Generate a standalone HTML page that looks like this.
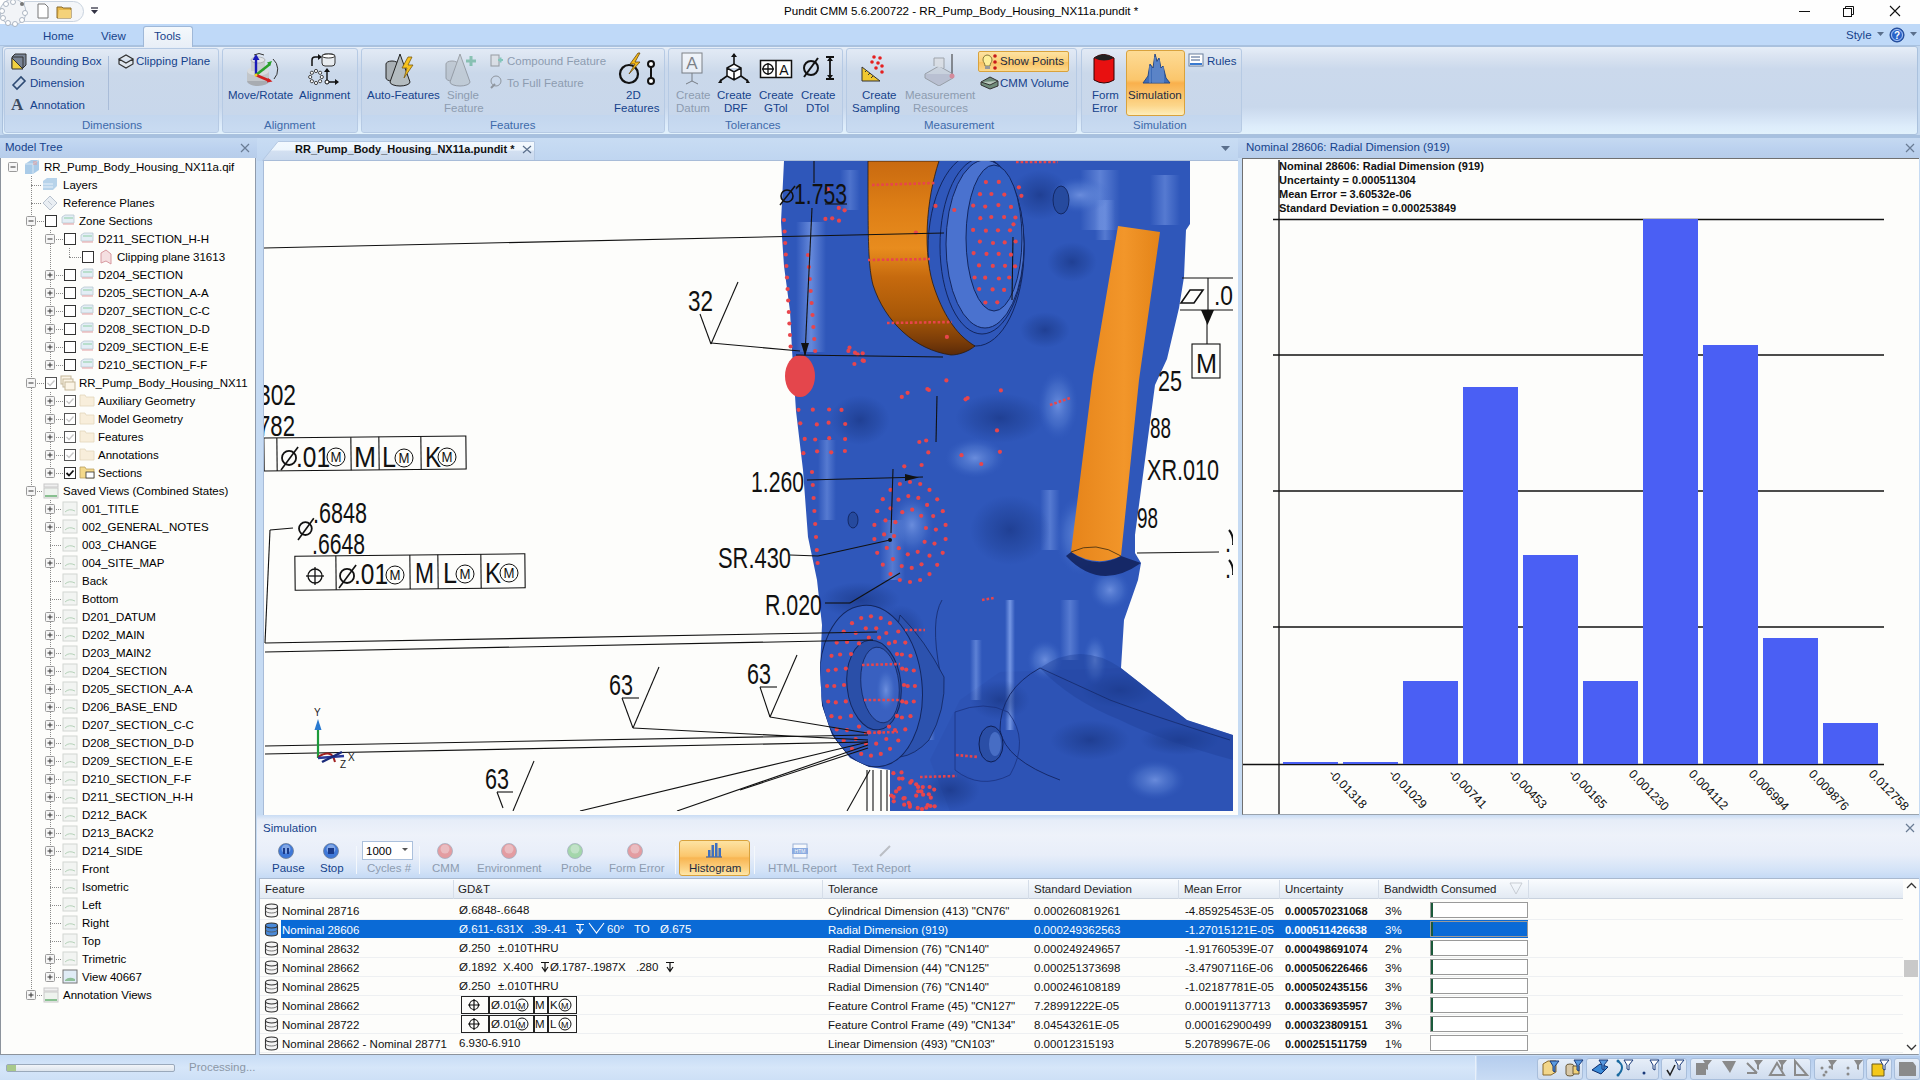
<!DOCTYPE html>
<html><head><meta charset="utf-8">
<style>
*{margin:0;padding:0;box-sizing:border-box}
html,body{width:1920px;height:1080px;overflow:hidden;background:#c4d8ef;font-family:"Liberation Sans",sans-serif;font-size:12px;color:#000}
.a{position:absolute}
.t{position:absolute;white-space:nowrap;line-height:1}
.rb{color:#15428b}
.dis{color:#8d9cb0}
.grp{top:48px;height:85px;border:1px solid #b6cae4;border-radius:3px;background:linear-gradient(#e2eaf5 0px,#d9e3f0 10px,#cad8ea 24px,#c8d7eb 66px,#c0d3ec 68px,#c4d7ef 84px);overflow:hidden}
.grp::after{content:"";position:absolute;left:0;right:0;bottom:0;height:17px;background:linear-gradient(#c3d6ee,#c9dbf1)}
</style></head><body>
<!-- TITLE BAR -->
<div class="a" style="left:0;top:0;width:1920px;height:24px;background:#fefefe"></div>
<div class="t" style="left:784px;top:5px;font-size:11.6px;color:#000">Pundit CMM 5.6.200722 - RR_Pump_Body_Housing_NX11a.pundit *</div>
<!-- TAB BAR -->
<div class="a" style="left:0;top:24px;width:1920px;height:22px;background:#bfd9f8"></div>
<div class="a" style="left:0;top:45px;width:1920px;height:1px;background:#a9c2e0"></div>
<!-- RIBBON -->
<div class="a" style="left:2px;top:46px;width:1916px;height:89px;border:1px solid #aac1dd;border-radius:3px;background:linear-gradient(#e6eef8 0px,#dce5f2 8px,#cbd9ec 22px,#c9d8ec 60px,#d3e2f4 70px,#deedfb 80px,#e2f2fc 89px)"></div>
<div class="a" style="left:0;top:135px;width:1920px;height:3px;background:#a7c0df"></div>

<!-- QUICK ACCESS -->
<div class="a" style="left:24px;top:1px;width:60px;height:21px;border:1px solid #c9d3df;border-radius:0 11px 11px 0;background:#f4f6f9"></div>
<svg class="a" style="left:0;top:0" width="30" height="27"><circle cx="13" cy="12" r="13" fill="#f2f4f7" stroke="#b8c2cf"/><g fill="#fff" stroke="#9aa6b5" stroke-width="0.8"><circle cx="6" cy="4" r="2.5"/><circle cx="13" cy="2" r="2.5"/><circle cx="2" cy="11" r="2.5"/><circle cx="3" cy="18" r="2.5"/><circle cx="8" cy="23" r="2.5"/><circle cx="15" cy="24" r="2.5"/><circle cx="22" cy="20" r="2.5"/><circle cx="25" cy="13" r="2.5"/></g><circle cx="22" cy="4" r="2" fill="#777"/></svg>
<svg class="a" style="left:36px;top:3px" width="40" height="17"><path d="M2 1h7l3 3v11H2z" fill="#fff" stroke="#777" stroke-width="1"/><path d="M21 4h5l1 1h8v10H21z" fill="#e8b84a" stroke="#8a6b2a"/><path d="M23 7h12v8H22z" fill="#f4d27a"/></svg>
<svg class="a" style="left:90px;top:6px" width="10" height="10"><path d="M1 2h7" stroke="#334" stroke-width="1.3"/><path d="M1 4h7l-3.5 4z" fill="#334"/></svg>
<!-- WINDOW CONTROLS -->
<div class="a" style="left:1799px;top:11px;width:11px;height:1px;background:#111"></div>
<svg class="a" style="left:1842px;top:5px" width="14" height="14"><rect x="1.5" y="3.5" width="8" height="8" fill="none" stroke="#111"/><path d="M3.5 3.5V1.5h8v8h-2" fill="none" stroke="#111"/></svg>
<svg class="a" style="left:1889px;top:5px" width="12" height="12"><path d="M1 1L11 11M11 1L1 11" stroke="#111" stroke-width="1.1"/></svg>
<!-- TABS -->
<div class="t rb" style="left:43px;top:31px;font-size:11.5px">Home</div>
<div class="t rb" style="left:101px;top:31px;font-size:11.5px">View</div>
<div class="a" style="left:143px;top:26px;width:50px;height:21px;border:1px solid #9fb8d8;border-bottom:none;border-radius:3px 3px 0 0;background:linear-gradient(#f4f8fc,#e8eef7)"></div>
<div class="t rb" style="left:154px;top:31px;font-size:11.5px">Tools</div>
<div class="t rb" style="left:1846px;top:30px;font-size:11.5px">Style</div>
<svg class="a" style="left:1877px;top:32px" width="8" height="5"><path d="M0 0h7l-3.5 4z" fill="#5a6f8c"/></svg>
<svg class="a" style="left:1889px;top:27px" width="16" height="16"><circle cx="8" cy="8" r="7" fill="#2a63c8" stroke="#1a3f8a"/><circle cx="8" cy="8" r="5.5" fill="none" stroke="#cfe0ff" stroke-width="0.8"/><text x="8" y="12" font-size="10" font-weight="bold" fill="#fff" text-anchor="middle" font-family="Liberation Sans">?</text></svg>
<svg class="a" style="left:1910px;top:32px" width="8" height="5"><path d="M0 0h7l-3.5 4z" fill="#5a6f8c"/></svg>
<!-- RIBBON GROUPS -->
<div class="a grp" style="left:4px;width:215px"></div>
<div class="a grp" style="left:222px;width:136px"></div>
<div class="a grp" style="left:361px;width:304px"></div>
<div class="a grp" style="left:668px;width:175px"></div>
<div class="a grp" style="left:846px;width:231px"></div>
<div class="a grp" style="left:1081px;width:161px"></div>
<div class="t rb" style="left:82px;top:120px;font-size:11.5px;color:#3e6aaa">Dimensions</div>
<div class="t rb" style="left:264px;top:120px;font-size:11.5px;color:#3e6aaa">Alignment</div>
<div class="t rb" style="left:490px;top:120px;font-size:11.5px;color:#3e6aaa">Features</div>
<div class="t rb" style="left:725px;top:120px;font-size:11.5px;color:#3e6aaa">Tolerances</div>
<div class="t rb" style="left:924px;top:120px;font-size:11.5px;color:#3e6aaa">Measurement</div>
<div class="t rb" style="left:1133px;top:120px;font-size:11.5px;color:#3e6aaa">Simulation</div>
<!-- Dimensions group -->
<svg class="a" style="left:10px;top:53px" width="18" height="18"><path d="M2 4l3-3h11v11l-3 3H2z" fill="#7a8596" stroke="#333"/><path d="M2 4h11v11" fill="none" stroke="#333"/><path d="M2 5l11 11H2z" fill="#f0d040" stroke="#333"/></svg>
<div class="t rb" style="left:30px;top:56px;font-size:11.5px">Bounding Box</div>
<svg class="a" style="left:10px;top:75px" width="18" height="16"><path d="M3 10l8-8 4 4-8 8z" fill="none" stroke="#2d4a73" stroke-width="1.6"/></svg>
<div class="t rb" style="left:30px;top:78px;font-size:11.5px">Dimension</div>
<div class="t" style="left:11px;top:96px;font-size:17px;font-family:'Liberation Serif';font-weight:bold;color:#3a4a60">A</div>
<div class="t rb" style="left:30px;top:100px;font-size:11.5px">Annotation</div>
<div class="a" style="left:108px;top:56px;width:1px;height:54px;background:#a9bcd8"></div>
<svg class="a" style="left:117px;top:53px" width="18" height="16"><path d="M2 6l7-4 7 4-7 4z M2 6v5l7 4 7-4V6" fill="#dfe6ee" stroke="#333" stroke-width="1.2"/></svg>
<div class="t rb" style="left:136px;top:56px;font-size:11.5px">Clipping Plane</div>
<!-- Alignment group -->
<svg class="a" style="left:245px;top:52px" width="34" height="36"><ellipse cx="13" cy="29" rx="11" ry="5" fill="#a8acb2"/><rect x="2" y="19" width="22" height="10" fill="#c2c6ca"/><ellipse cx="13" cy="19" rx="11" ry="4.5" fill="#d8dbde"/><rect x="6" y="8" width="14" height="11" fill="#c8ccd0"/><ellipse cx="13" cy="8" rx="7" ry="3" fill="#e2e5e8" stroke="#999" stroke-width="0.6"/><path d="M11 23V6" stroke="#1a1ab8" stroke-width="2.4"/><path d="M7.5 8L11 2l3.5 6z" fill="#1a1ab8"/><path d="M11 23L25 12" stroke="#2aa02a" stroke-width="2.6"/><path d="M22 10.5l5-1.5-2 5z" fill="#2aa02a"/><path d="M11 23L25 29" stroke="#d02020" stroke-width="2.6"/><path d="M23 26l4.5 3.5-5.5 1z" fill="#d02020"/><circle cx="11" cy="23" r="1.5" fill="#f0d020"/><path d="M28 7a14 14 0 0 1 1 20" fill="none" stroke="#333" stroke-width="1"/><path d="M9 3q5-3 10 0" fill="none" stroke="#333" stroke-width="1"/></svg>
<svg class="a" style="left:307px;top:52px" width="36" height="36"><path d="M5 14V8a3 3 0 0 1 3-3h4" fill="none" stroke="#111" stroke-width="1.5"/><path d="M11 2l4 3-4 3z" fill="#111"/><rect x="15" y="2" width="13" height="12" rx="3" fill="#e8ecf0" stroke="#333"/><ellipse cx="21.5" cy="4" rx="6.5" ry="2" fill="#fff" stroke="#333"/><g fill="#fff" stroke="#333" stroke-width="0.9"><circle cx="14.8" cy="25.0" r="1.6"/><circle cx="13.1" cy="29.2" r="1.6"/><circle cx="9.0" cy="31.0" r="1.6"/><circle cx="4.9" cy="29.2" r="1.6"/><circle cx="3.2" cy="25.0" r="1.6"/><circle cx="4.9" cy="20.8" r="1.6"/><circle cx="9.0" cy="19.0" r="1.6"/><circle cx="13.1" cy="20.8" r="1.6"/></g><path d="M20 30V18M20 30h10" stroke="#111" stroke-width="1.4"/><path d="M17 20l3-4 3 4z M28 27l4 3-4 3z" fill="#111"/><circle cx="20" cy="30" r="2" fill="#fff" stroke="#111"/></svg>
<div class="t rb" style="left:228px;top:90px;font-size:11.5px">Move/Rotate</div>
<div class="t rb" style="left:299px;top:90px;font-size:11.5px">Alignment</div>
<!-- Features group -->
<svg class="a" style="left:384px;top:52px" width="36" height="36"><path d="M2 12a6 3 0 0 1 12 0v14a6 3 0 0 1-12 0z" fill="#a9b0b5" stroke="#222"/><path d="M16 2L6 30a10 4 0 0 0 20 0z" fill="#b4bcc0" stroke="#222"/><path d="M24 5l-6 11h5l-3 10 9-13h-5l4-8z" fill="#f7c21e" stroke="#7a5a10" stroke-width="0.8"/></svg>
<svg class="a" style="left:444px;top:52px" width="36" height="36" opacity="0.45"><path d="M2 12a6 3 0 0 1 12 0v14a6 3 0 0 1-12 0z" fill="#a9b0b5" stroke="#555"/><path d="M16 2L6 30a10 4 0 0 0 20 0z" fill="#b4bcc0" stroke="#555"/><path d="M27 4v10M22 9h10" stroke="#2a9a6a" stroke-width="3"/></svg>
<div class="t rb" style="left:367px;top:90px;font-size:11.5px">Auto-Features</div>
<div class="t dis" style="left:447px;top:90px;font-size:11.5px">Single</div>
<div class="t dis" style="left:444px;top:103px;font-size:11.5px">Feature</div>
<svg class="a" style="left:489px;top:53px" width="15" height="15" opacity="0.5"><rect x="2" y="2" width="8" height="11" fill="#ddd" stroke="#555"/><path d="M9 7h5M11.5 4.5v5" stroke="#3a8" stroke-width="2"/></svg>
<div class="t dis" style="left:507px;top:56px;font-size:11.5px">Compound Feature</div>
<svg class="a" style="left:488px;top:75px" width="15" height="15" opacity="0.5"><circle cx="8" cy="6" r="5" fill="none" stroke="#555"/><path d="M3 13l4-4" stroke="#555" stroke-width="2"/></svg>
<div class="t dis" style="left:507px;top:78px;font-size:11.5px">To Full Feature</div>
<svg class="a" style="left:617px;top:52px" width="44" height="36"><circle cx="12" cy="22" r="9" fill="none" stroke="#111" stroke-width="2.2"/><path d="M21 1l-8 11h5l-6 10 11-12h-5l5-9z" fill="#f3b81a" stroke="#6a4a10" stroke-width="0.8"/><circle cx="34" cy="12" r="3" fill="#fff" stroke="#111" stroke-width="2"/><circle cx="34" cy="29" r="3" fill="#fff" stroke="#111" stroke-width="2"/><path d="M34 15v11" stroke="#111" stroke-width="2"/></svg>
<div class="t rb" style="left:626px;top:90px;font-size:11.5px">2D</div>
<div class="t rb" style="left:614px;top:103px;font-size:11.5px">Features</div>
<!-- Tolerances group -->
<svg class="a" style="left:678px;top:51px" width="34" height="36" opacity="0.55"><rect x="4" y="2" width="20" height="20" fill="#fff" stroke="#333"/><text x="14" y="18" font-size="17" text-anchor="middle" fill="#333" font-family="Liberation Sans">A</text><path d="M14 22v8M8 33l6-3 6 3" stroke="#333" fill="none"/></svg>
<div class="t dis" style="left:676px;top:90px;font-size:11.5px">Create</div>
<div class="t dis" style="left:676px;top:103px;font-size:11.5px">Datum</div>
<svg class="a" style="left:717px;top:52px" width="36" height="36"><path d="M17 2v10" stroke="#111" stroke-width="1.6"/><path d="M14 5l3-4 3 4z" fill="#111"/><path d="M10 16l7-4 7 4v8l-7 4-7-4z M10 16l7 4 7-4 M17 20v8" fill="#fff" stroke="#111" stroke-width="1.5"/><path d="M10 24l-7 5M24 24l7 5" stroke="#111" stroke-width="1.6"/><path d="M1 31l3-4 1 4z M33 31l-3-4-1 4z" fill="#111"/></svg>
<div class="t rb" style="left:717px;top:90px;font-size:11.5px">Create</div>
<div class="t rb" style="left:724px;top:103px;font-size:11.5px">DRF</div>
<svg class="a" style="left:759px;top:58px" width="36" height="22"><rect x="1.5" y="2.5" width="31" height="17" fill="#fff" stroke="#111" stroke-width="1.5"/><path d="M17 3v16" stroke="#111" stroke-width="1.5"/><circle cx="9" cy="11" r="5" fill="none" stroke="#111" stroke-width="1.3"/><path d="M3 11h12M9 5v12" stroke="#111" stroke-width="1.3"/><text x="25" y="17" font-size="14" text-anchor="middle" fill="#111" font-family="Liberation Sans">A</text></svg>
<div class="t rb" style="left:759px;top:90px;font-size:11.5px">Create</div>
<div class="t rb" style="left:764px;top:103px;font-size:11.5px">GTol</div>
<svg class="a" style="left:801px;top:55px" width="36" height="26"><circle cx="10" cy="13" r="7" fill="none" stroke="#111" stroke-width="2"/><path d="M3 22L17 3" stroke="#111" stroke-width="2"/><path d="M29 2v22M25 2h8M25 24h8" stroke="#111" stroke-width="1.8"/><path d="M26 6l3-4 3 4zM26 20l3 4 3-4z" fill="#111"/></svg>
<div class="t rb" style="left:801px;top:90px;font-size:11.5px">Create</div>
<div class="t rb" style="left:806px;top:103px;font-size:11.5px">DTol</div>
<!-- Measurement group -->
<svg class="a" style="left:860px;top:55px" width="30" height="30"><path d="M2 12l18 14H2z" fill="#f0c830" stroke="#333"/><path d="M5 17l2-2M8 20l2-2M11 23l2-2" stroke="#333"/><g fill="#e52020"><circle cx="14" cy="2" r="1.8"/><circle cx="20" cy="3" r="1.8"/><circle cx="12" cy="7" r="1.8"/><circle cx="18" cy="8" r="1.8"/><circle cx="22" cy="11" r="1.8"/><circle cx="16" cy="13" r="1.8"/><circle cx="22" cy="17" r="1.8"/></g></svg>
<div class="t rb" style="left:862px;top:90px;font-size:11.5px">Create</div>
<div class="t rb" style="left:852px;top:103px;font-size:11.5px">Sampling</div>
<svg class="a" style="left:922px;top:52px" width="36" height="34" opacity="0.5"><path d="M3 22l14-8 14 8-14 8z" fill="#c8ccd2" stroke="#666"/><path d="M3 22v4l14 8 14-8v-4" fill="#aab" stroke="#666"/><path d="M12 14V6h10v10" fill="#ddd" stroke="#666"/><path d="M30 2v20" stroke="#333" stroke-width="2"/><circle cx="30" cy="24" r="2.5" fill="#e04050"/></svg>
<div class="t dis" style="left:905px;top:90px;font-size:11.5px">Measurement</div>
<div class="t dis" style="left:913px;top:103px;font-size:11.5px">Resources</div>
<div class="a" style="left:978px;top:51px;width:91px;height:21px;border:1px solid #d9a23c;border-radius:2px;background:linear-gradient(#fde3a3,#fcd07a 50%,#f8c061 51%,#fcd98c)"></div>
<svg class="a" style="left:982px;top:53px" width="18" height="18"><path d="M5 2a5 5 0 0 1 5 5c0 2-2 3-2 6H3c0-3-2-4-2-6a5 5 0 0 1 4-5z" fill="#ffef9a" stroke="#8a7a3a"/><rect x="3" y="13" width="5" height="3" fill="#999"/><g fill="#c81a1a"><circle cx="13" cy="3" r="1.8"/><circle cx="13" cy="9" r="1.8"/><circle cx="13" cy="15" r="1.8"/></g></svg>
<div class="t" style="left:1000px;top:56px;font-size:11.5px;color:#1d2a40">Show Points</div>
<svg class="a" style="left:980px;top:75px" width="19" height="15"><path d="M1 7l9-5 8 4v5l-8 3-9-4z" fill="#6f8b7a" stroke="#333"/><path d="M1 7l9 3 8-4" fill="#b7c8bc" stroke="#333"/></svg>
<div class="t rb" style="left:1000px;top:78px;font-size:11.5px">CMM Volume</div>
<!-- Simulation group -->
<svg class="a" style="left:1091px;top:52px" width="26" height="34"><path d="M3 6q9-7 20 0v22q-10 6-20 0z" fill="#e81010" stroke="#300"/><path d="M3 6q9-7 20 0q-10 5-20 0z" fill="#222"/></svg>
<div class="t rb" style="left:1092px;top:90px;font-size:11.5px">Form</div>
<div class="t rb" style="left:1092px;top:103px;font-size:11.5px">Error</div>
<div class="a" style="left:1126px;top:50px;width:59px;height:66px;border:1px solid #d9a23c;border-radius:3px;background:linear-gradient(#fddb95,#fbc66c 45%,#f9b04c 50%,#fcd68a 85%,#feeebb)"></div>
<svg class="a" style="left:1140px;top:52px" width="32" height="33"><path d="M3 31L8 24L10 12L13 16L15 2L17 9L19 6L21 16L23 14L26 26L30 31z" fill="#3f6db8" stroke="#294a86"/><path d="M10 31V14M13 31V16M15 31V5M17 31V10M19 31V8M21 31V16M23 31V15" stroke="#86a7de" stroke-width="0.8"/></svg>
<div class="t" style="left:1128px;top:90px;font-size:11.5px;color:#1d2a40">Simulation</div>
<svg class="a" style="left:1188px;top:53px" width="16" height="15"><rect x="1" y="1" width="14" height="12" fill="#fff" stroke="#6a7f9c"/><path d="M3 4h9M3 7h9" stroke="#3f5a8a"/><rect x="2" y="10" width="12" height="2" fill="#3a7ad0"/></svg>
<div class="t rb" style="left:1207px;top:56px;font-size:11.5px">Rules</div>

<!-- DOCK AREA -->
<div class="a" style="left:0;top:138px;width:1920px;height:917px;background:#c6dbf3"></div>
<div class="a" style="left:0;top:138px;width:257px;height:20px;background:linear-gradient(#c5d9f1,#bcd2ef 50%,#b7cdea)"></div>
<div class="t rb" style="left:5px;top:142px;font-size:11.5px">Model Tree</div>
<svg class="a" style="left:240px;top:143px" width="10" height="10"><path d="M1 1L9 9M9 1L1 9" stroke="#6a7c94" stroke-width="1.2"/></svg>
<div class="a" style="left:0;top:158px;width:256px;height:897px;background:#fdfdfb;border-left:1px solid #8c939c;border-right:1px solid #8f9bab;border-bottom:1px solid #8c939c"></div>
<div class="a" style="left:31px;top:176px;width:1px;height:819px;border-left:1px dotted #8a8a8a"></div>
<div class="a" style="left:50px;top:230px;width:1px;height:135px;border-left:1px dotted #8a8a8a"></div>
<div class="a" style="left:50px;top:392px;width:1px;height:81px;border-left:1px dotted #8a8a8a"></div>
<div class="a" style="left:50px;top:500px;width:1px;height:477px;border-left:1px dotted #8a8a8a"></div>
<div class="a" style="left:69px;top:248px;width:1px;height:9px;border-left:1px dotted #8a8a8a"></div>
<svg class="a" style="left:8px;top:162px" width="10" height="10"><rect x="0.5" y="0.5" width="9" height="9" rx="1" fill="#f6f6f6" stroke="#9a9a9a"/><g transform="translate(0.5,0.5)"><path d="M2 4.5h5" stroke="#333"/></g></svg>
<div class="a" style="left:24px;top:159px"><svg width="16" height="16"><path d="M1 5l6-4h8v10l-6 4H1z" fill="#a9cbe8"/><path d="M1 5h8v10M9 5l6-4" fill="none" stroke="#d6e6f3"/><path d="M10 2v4M12 2v4" stroke="#e39b9b"/></svg></div>
<div class="t" style="left:44px;top:162px;font-size:11.5px">RR_Pump_Body_Housing_NX11a.qif</div>
<div class="a" style="left:31px;top:185px;width:10px;height:1px;border-top:1px dotted #8a8a8a"></div>
<div class="a" style="left:42px;top:177px"><svg width="16" height="14"><path d="M1 4l4-3h10v8l-4 4H1z" fill="#b7d3ea"/><path d="M1 7h10M1 10h10" stroke="#e8f1fa"/></svg></div>
<div class="t" style="left:63px;top:180px;font-size:11.5px">Layers</div>
<div class="a" style="left:31px;top:203px;width:10px;height:1px;border-top:1px dotted #8a8a8a"></div>
<div class="a" style="left:42px;top:195px"><svg width="16" height="16"><path d="M8 1l7 7-7 7-7-7z" fill="#e9eef3" stroke="#b9c3cf"/><path d="M6 6l4 4" stroke="#c0c8d2"/></svg></div>
<div class="t" style="left:63px;top:198px;font-size:11.5px">Reference Planes</div>
<div class="a" style="left:31px;top:221px;width:13px;height:1px;border-top:1px dotted #8a8a8a"></div>
<svg class="a" style="left:26px;top:216px" width="10" height="10"><rect x="0.5" y="0.5" width="9" height="9" rx="1" fill="#f6f6f6" stroke="#9a9a9a"/><g transform="translate(0.5,0.5)"><path d="M2 4.5h5" stroke="#333"/></g></svg>
<svg class="a" style="left:45px;top:215px" width="12" height="12"><rect x="0.5" y="0.5" width="11" height="11" fill="#fff" stroke="#333"/></svg>
<div class="a" style="left:60px;top:213px"><svg width="16" height="14"><path d="M2 4l3-2h9v8H2z" fill="#e3eef6" stroke="#b7c6d2" stroke-width="0.8"/><path d="M4 5h9" stroke="#8fcfa4"/><path d="M3 11h11" stroke="#e49ea2"/></svg></div>
<div class="t" style="left:79px;top:216px;font-size:11.5px">Zone Sections</div>
<div class="a" style="left:50px;top:239px;width:13px;height:1px;border-top:1px dotted #8a8a8a"></div>
<svg class="a" style="left:45px;top:234px" width="10" height="10"><rect x="0.5" y="0.5" width="9" height="9" rx="1" fill="#f6f6f6" stroke="#9a9a9a"/><g transform="translate(0.5,0.5)"><path d="M2 4.5h5" stroke="#333"/></g></svg>
<svg class="a" style="left:64px;top:233px" width="12" height="12"><rect x="0.5" y="0.5" width="11" height="11" fill="#fff" stroke="#333"/></svg>
<div class="a" style="left:79px;top:231px"><svg width="16" height="14"><path d="M2 4l3-2h9v8H2z" fill="#e3eef6" stroke="#b7c6d2" stroke-width="0.8"/><path d="M4 5h9" stroke="#8fcfa4"/><path d="M3 11h11" stroke="#e49ea2"/></svg></div>
<div class="t" style="left:98px;top:234px;font-size:11.5px">D211_SECTION_H-H</div>
<div class="a" style="left:69px;top:257px;width:12px;height:1px;border-top:1px dotted #8a8a8a"></div>
<svg class="a" style="left:82px;top:251px" width="12" height="12"><rect x="0.5" y="0.5" width="11" height="11" fill="#fff" stroke="#333"/></svg>
<div class="a" style="left:99px;top:249px"><svg width="14" height="16"><path d="M2 4l5-3 5 4v10l-5-3-5 2z" fill="#f5dfe1" stroke="#d79aa0"/></svg></div>
<div class="t" style="left:117px;top:252px;font-size:11.5px">Clipping plane 31613</div>
<div class="a" style="left:50px;top:275px;width:13px;height:1px;border-top:1px dotted #8a8a8a"></div>
<svg class="a" style="left:45px;top:270px" width="10" height="10"><rect x="0.5" y="0.5" width="9" height="9" rx="1" fill="#f6f6f6" stroke="#9a9a9a"/><g transform="translate(0.5,0.5)"><path d="M2 4.5h5" stroke="#333"/><path d="M4.5 2v5" stroke="#333"/></g></svg>
<svg class="a" style="left:64px;top:269px" width="12" height="12"><rect x="0.5" y="0.5" width="11" height="11" fill="#fff" stroke="#333"/></svg>
<div class="a" style="left:79px;top:267px"><svg width="16" height="14"><path d="M2 4l3-2h9v8H2z" fill="#e3eef6" stroke="#b7c6d2" stroke-width="0.8"/><path d="M4 5h9" stroke="#8fcfa4"/><path d="M3 11h11" stroke="#e49ea2"/></svg></div>
<div class="t" style="left:98px;top:270px;font-size:11.5px">D204_SECTION</div>
<div class="a" style="left:50px;top:293px;width:13px;height:1px;border-top:1px dotted #8a8a8a"></div>
<svg class="a" style="left:45px;top:288px" width="10" height="10"><rect x="0.5" y="0.5" width="9" height="9" rx="1" fill="#f6f6f6" stroke="#9a9a9a"/><g transform="translate(0.5,0.5)"><path d="M2 4.5h5" stroke="#333"/><path d="M4.5 2v5" stroke="#333"/></g></svg>
<svg class="a" style="left:64px;top:287px" width="12" height="12"><rect x="0.5" y="0.5" width="11" height="11" fill="#fff" stroke="#333"/></svg>
<div class="a" style="left:79px;top:285px"><svg width="16" height="14"><path d="M2 4l3-2h9v8H2z" fill="#e3eef6" stroke="#b7c6d2" stroke-width="0.8"/><path d="M4 5h9" stroke="#8fcfa4"/><path d="M3 11h11" stroke="#e49ea2"/></svg></div>
<div class="t" style="left:98px;top:288px;font-size:11.5px">D205_SECTION_A-A</div>
<div class="a" style="left:50px;top:311px;width:13px;height:1px;border-top:1px dotted #8a8a8a"></div>
<svg class="a" style="left:45px;top:306px" width="10" height="10"><rect x="0.5" y="0.5" width="9" height="9" rx="1" fill="#f6f6f6" stroke="#9a9a9a"/><g transform="translate(0.5,0.5)"><path d="M2 4.5h5" stroke="#333"/><path d="M4.5 2v5" stroke="#333"/></g></svg>
<svg class="a" style="left:64px;top:305px" width="12" height="12"><rect x="0.5" y="0.5" width="11" height="11" fill="#fff" stroke="#333"/></svg>
<div class="a" style="left:79px;top:303px"><svg width="16" height="14"><path d="M2 4l3-2h9v8H2z" fill="#e3eef6" stroke="#b7c6d2" stroke-width="0.8"/><path d="M4 5h9" stroke="#8fcfa4"/><path d="M3 11h11" stroke="#e49ea2"/></svg></div>
<div class="t" style="left:98px;top:306px;font-size:11.5px">D207_SECTION_C-C</div>
<div class="a" style="left:50px;top:329px;width:13px;height:1px;border-top:1px dotted #8a8a8a"></div>
<svg class="a" style="left:45px;top:324px" width="10" height="10"><rect x="0.5" y="0.5" width="9" height="9" rx="1" fill="#f6f6f6" stroke="#9a9a9a"/><g transform="translate(0.5,0.5)"><path d="M2 4.5h5" stroke="#333"/><path d="M4.5 2v5" stroke="#333"/></g></svg>
<svg class="a" style="left:64px;top:323px" width="12" height="12"><rect x="0.5" y="0.5" width="11" height="11" fill="#fff" stroke="#333"/></svg>
<div class="a" style="left:79px;top:321px"><svg width="16" height="14"><path d="M2 4l3-2h9v8H2z" fill="#e3eef6" stroke="#b7c6d2" stroke-width="0.8"/><path d="M4 5h9" stroke="#8fcfa4"/><path d="M3 11h11" stroke="#e49ea2"/></svg></div>
<div class="t" style="left:98px;top:324px;font-size:11.5px">D208_SECTION_D-D</div>
<div class="a" style="left:50px;top:347px;width:13px;height:1px;border-top:1px dotted #8a8a8a"></div>
<svg class="a" style="left:45px;top:342px" width="10" height="10"><rect x="0.5" y="0.5" width="9" height="9" rx="1" fill="#f6f6f6" stroke="#9a9a9a"/><g transform="translate(0.5,0.5)"><path d="M2 4.5h5" stroke="#333"/><path d="M4.5 2v5" stroke="#333"/></g></svg>
<svg class="a" style="left:64px;top:341px" width="12" height="12"><rect x="0.5" y="0.5" width="11" height="11" fill="#fff" stroke="#333"/></svg>
<div class="a" style="left:79px;top:339px"><svg width="16" height="14"><path d="M2 4l3-2h9v8H2z" fill="#e3eef6" stroke="#b7c6d2" stroke-width="0.8"/><path d="M4 5h9" stroke="#8fcfa4"/><path d="M3 11h11" stroke="#e49ea2"/></svg></div>
<div class="t" style="left:98px;top:342px;font-size:11.5px">D209_SECTION_E-E</div>
<div class="a" style="left:50px;top:365px;width:13px;height:1px;border-top:1px dotted #8a8a8a"></div>
<svg class="a" style="left:45px;top:360px" width="10" height="10"><rect x="0.5" y="0.5" width="9" height="9" rx="1" fill="#f6f6f6" stroke="#9a9a9a"/><g transform="translate(0.5,0.5)"><path d="M2 4.5h5" stroke="#333"/><path d="M4.5 2v5" stroke="#333"/></g></svg>
<svg class="a" style="left:64px;top:359px" width="12" height="12"><rect x="0.5" y="0.5" width="11" height="11" fill="#fff" stroke="#333"/></svg>
<div class="a" style="left:79px;top:357px"><svg width="16" height="14"><path d="M2 4l3-2h9v8H2z" fill="#e3eef6" stroke="#b7c6d2" stroke-width="0.8"/><path d="M4 5h9" stroke="#8fcfa4"/><path d="M3 11h11" stroke="#e49ea2"/></svg></div>
<div class="t" style="left:98px;top:360px;font-size:11.5px">D210_SECTION_F-F</div>
<div class="a" style="left:31px;top:383px;width:13px;height:1px;border-top:1px dotted #8a8a8a"></div>
<svg class="a" style="left:26px;top:378px" width="10" height="10"><rect x="0.5" y="0.5" width="9" height="9" rx="1" fill="#f6f6f6" stroke="#9a9a9a"/><g transform="translate(0.5,0.5)"><path d="M2 4.5h5" stroke="#333"/></g></svg>
<svg class="a" style="left:45px;top:377px" width="12" height="12"><rect x="0.5" y="0.5" width="11" height="11" fill="#fff" stroke="#555"/><path d="M2.5 6l2.5 2.5 4.5-5" fill="none" stroke="#c7c7c7" stroke-width="1.3"/></svg>
<div class="a" style="left:60px;top:375px"><svg width="16" height="16"><rect x="1" y="1" width="10" height="8" fill="#fbf4e6" stroke="#c5b79a"/><rect x="3" y="4" width="10" height="8" fill="#fbf4e6" stroke="#c5b79a"/><rect x="5" y="7" width="10" height="8" fill="#fbf4e6" stroke="#c5b79a"/></svg></div>
<div class="t" style="left:79px;top:378px;font-size:11.5px">RR_Pump_Body_Housing_NX11</div>
<div class="a" style="left:50px;top:401px;width:13px;height:1px;border-top:1px dotted #8a8a8a"></div>
<svg class="a" style="left:45px;top:396px" width="10" height="10"><rect x="0.5" y="0.5" width="9" height="9" rx="1" fill="#f6f6f6" stroke="#9a9a9a"/><g transform="translate(0.5,0.5)"><path d="M2 4.5h5" stroke="#333"/><path d="M4.5 2v5" stroke="#333"/></g></svg>
<svg class="a" style="left:64px;top:395px" width="12" height="12"><rect x="0.5" y="0.5" width="11" height="11" fill="#fff" stroke="#555"/><path d="M2.5 6l2.5 2.5 4.5-5" fill="none" stroke="#c7c7c7" stroke-width="1.3"/></svg>
<div class="a" style="left:79px;top:393px"><svg width="16" height="14"><path d="M1 2h5l1 2h8v9H1z" fill="#f8eedb" stroke="#e2d5bc" stroke-width="0.8"/></svg></div>
<div class="t" style="left:98px;top:396px;font-size:11.5px">Auxiliary Geometry</div>
<div class="a" style="left:50px;top:419px;width:13px;height:1px;border-top:1px dotted #8a8a8a"></div>
<svg class="a" style="left:45px;top:414px" width="10" height="10"><rect x="0.5" y="0.5" width="9" height="9" rx="1" fill="#f6f6f6" stroke="#9a9a9a"/><g transform="translate(0.5,0.5)"><path d="M2 4.5h5" stroke="#333"/><path d="M4.5 2v5" stroke="#333"/></g></svg>
<svg class="a" style="left:64px;top:413px" width="12" height="12"><rect x="0.5" y="0.5" width="11" height="11" fill="#fff" stroke="#555"/><path d="M2.5 6l2.5 2.5 4.5-5" fill="none" stroke="#c7c7c7" stroke-width="1.3"/></svg>
<div class="a" style="left:79px;top:411px"><svg width="16" height="14"><path d="M1 2h5l1 2h8v9H1z" fill="#f8eedb" stroke="#e2d5bc" stroke-width="0.8"/></svg></div>
<div class="t" style="left:98px;top:414px;font-size:11.5px">Model Geometry</div>
<div class="a" style="left:50px;top:437px;width:13px;height:1px;border-top:1px dotted #8a8a8a"></div>
<svg class="a" style="left:45px;top:432px" width="10" height="10"><rect x="0.5" y="0.5" width="9" height="9" rx="1" fill="#f6f6f6" stroke="#9a9a9a"/><g transform="translate(0.5,0.5)"><path d="M2 4.5h5" stroke="#333"/><path d="M4.5 2v5" stroke="#333"/></g></svg>
<svg class="a" style="left:64px;top:431px" width="12" height="12"><rect x="0.5" y="0.5" width="11" height="11" fill="#fff" stroke="#555"/><path d="M2.5 6l2.5 2.5 4.5-5" fill="none" stroke="#c7c7c7" stroke-width="1.3"/></svg>
<div class="a" style="left:79px;top:429px"><svg width="16" height="14"><path d="M1 2h5l1 2h8v9H1z" fill="#f8eedb" stroke="#e2d5bc" stroke-width="0.8"/></svg></div>
<div class="t" style="left:98px;top:432px;font-size:11.5px">Features</div>
<div class="a" style="left:50px;top:455px;width:13px;height:1px;border-top:1px dotted #8a8a8a"></div>
<svg class="a" style="left:45px;top:450px" width="10" height="10"><rect x="0.5" y="0.5" width="9" height="9" rx="1" fill="#f6f6f6" stroke="#9a9a9a"/><g transform="translate(0.5,0.5)"><path d="M2 4.5h5" stroke="#333"/><path d="M4.5 2v5" stroke="#333"/></g></svg>
<svg class="a" style="left:64px;top:449px" width="12" height="12"><rect x="0.5" y="0.5" width="11" height="11" fill="#fff" stroke="#555"/><path d="M2.5 6l2.5 2.5 4.5-5" fill="none" stroke="#c7c7c7" stroke-width="1.3"/></svg>
<div class="a" style="left:79px;top:447px"><svg width="16" height="14"><path d="M1 2h5l1 2h8v9H1z" fill="#f8eedb" stroke="#e2d5bc" stroke-width="0.8"/></svg></div>
<div class="t" style="left:98px;top:450px;font-size:11.5px">Annotations</div>
<div class="a" style="left:50px;top:473px;width:13px;height:1px;border-top:1px dotted #8a8a8a"></div>
<svg class="a" style="left:45px;top:468px" width="10" height="10"><rect x="0.5" y="0.5" width="9" height="9" rx="1" fill="#f6f6f6" stroke="#9a9a9a"/><g transform="translate(0.5,0.5)"><path d="M2 4.5h5" stroke="#333"/><path d="M4.5 2v5" stroke="#333"/></g></svg>
<svg class="a" style="left:64px;top:467px" width="12" height="12"><rect x="0.5" y="0.5" width="11" height="11" fill="#fff" stroke="#333"/><path d="M2.5 6l2.5 2.5 4.5-5" fill="none" stroke="#111" stroke-width="1.8"/></svg>
<div class="a" style="left:79px;top:465px"><svg width="16" height="14"><path d="M1 2h5l1 2h8v9H1z" fill="#f4d98a" stroke="#b9a060" stroke-width="0.8"/><rect x="7" y="7" width="8" height="6" fill="#fff" stroke="#333" stroke-width="0.8"/></svg></div>
<div class="t" style="left:98px;top:468px;font-size:11.5px">Sections</div>
<div class="a" style="left:31px;top:491px;width:11px;height:1px;border-top:1px dotted #8a8a8a"></div>
<svg class="a" style="left:26px;top:486px" width="10" height="10"><rect x="0.5" y="0.5" width="9" height="9" rx="1" fill="#f6f6f6" stroke="#9a9a9a"/><g transform="translate(0.5,0.5)"><path d="M2 4.5h5" stroke="#333"/></g></svg>
<div class="a" style="left:43px;top:483px"><svg width="16" height="16"><rect x="1" y="1" width="14" height="3" fill="#f0f0f0" stroke="#c8c8c8"/><rect x="1" y="5" width="14" height="10" fill="#eef3ee" stroke="#c8c8c8"/><path d="M2 13h12" stroke="#88c090" stroke-width="2"/></svg></div>
<div class="t" style="left:63px;top:486px;font-size:11.5px">Saved Views (Combined States)</div>
<div class="a" style="left:50px;top:509px;width:11px;height:1px;border-top:1px dotted #8a8a8a"></div>
<svg class="a" style="left:45px;top:504px" width="10" height="10"><rect x="0.5" y="0.5" width="9" height="9" rx="1" fill="#f6f6f6" stroke="#9a9a9a"/><g transform="translate(0.5,0.5)"><path d="M2 4.5h5" stroke="#333"/><path d="M4.5 2v5" stroke="#333"/></g></svg>
<div class="a" style="left:62px;top:501px"><svg width="16" height="15"><rect x="1" y="1" width="14" height="13" fill="#f2f4f2" stroke="#d2d6d2"/><path d="M3 11q4-4 10-1" fill="none" stroke="#b5d2b9"/></svg></div>
<div class="t" style="left:82px;top:504px;font-size:11.5px">001_TITLE</div>
<div class="a" style="left:50px;top:527px;width:11px;height:1px;border-top:1px dotted #8a8a8a"></div>
<svg class="a" style="left:45px;top:522px" width="10" height="10"><rect x="0.5" y="0.5" width="9" height="9" rx="1" fill="#f6f6f6" stroke="#9a9a9a"/><g transform="translate(0.5,0.5)"><path d="M2 4.5h5" stroke="#333"/><path d="M4.5 2v5" stroke="#333"/></g></svg>
<div class="a" style="left:62px;top:519px"><svg width="16" height="15"><rect x="1" y="1" width="14" height="13" fill="#f2f4f2" stroke="#d2d6d2"/><path d="M3 11q4-4 10-1" fill="none" stroke="#b5d2b9"/></svg></div>
<div class="t" style="left:82px;top:522px;font-size:11.5px">002_GENERAL_NOTES</div>
<div class="a" style="left:50px;top:545px;width:11px;height:1px;border-top:1px dotted #8a8a8a"></div>
<div class="a" style="left:62px;top:537px"><svg width="16" height="15"><rect x="1" y="1" width="14" height="13" fill="#f2f4f2" stroke="#d2d6d2"/><path d="M3 11q4-4 10-1" fill="none" stroke="#b5d2b9"/></svg></div>
<div class="t" style="left:82px;top:540px;font-size:11.5px">003_CHANGE</div>
<div class="a" style="left:50px;top:563px;width:11px;height:1px;border-top:1px dotted #8a8a8a"></div>
<svg class="a" style="left:45px;top:558px" width="10" height="10"><rect x="0.5" y="0.5" width="9" height="9" rx="1" fill="#f6f6f6" stroke="#9a9a9a"/><g transform="translate(0.5,0.5)"><path d="M2 4.5h5" stroke="#333"/><path d="M4.5 2v5" stroke="#333"/></g></svg>
<div class="a" style="left:62px;top:555px"><svg width="16" height="15"><rect x="1" y="1" width="14" height="13" fill="#f2f4f2" stroke="#d2d6d2"/><path d="M3 11q4-4 10-1" fill="none" stroke="#b5d2b9"/></svg></div>
<div class="t" style="left:82px;top:558px;font-size:11.5px">004_SITE_MAP</div>
<div class="a" style="left:50px;top:581px;width:11px;height:1px;border-top:1px dotted #8a8a8a"></div>
<div class="a" style="left:62px;top:573px"><svg width="16" height="15"><rect x="1" y="1" width="14" height="13" fill="#f2f4f2" stroke="#d2d6d2"/><path d="M3 11q4-4 10-1" fill="none" stroke="#b5d2b9"/></svg></div>
<div class="t" style="left:82px;top:576px;font-size:11.5px">Back</div>
<div class="a" style="left:50px;top:599px;width:11px;height:1px;border-top:1px dotted #8a8a8a"></div>
<div class="a" style="left:62px;top:591px"><svg width="16" height="15"><rect x="1" y="1" width="14" height="13" fill="#f2f4f2" stroke="#d2d6d2"/><path d="M3 11q4-4 10-1" fill="none" stroke="#b5d2b9"/></svg></div>
<div class="t" style="left:82px;top:594px;font-size:11.5px">Bottom</div>
<div class="a" style="left:50px;top:617px;width:11px;height:1px;border-top:1px dotted #8a8a8a"></div>
<svg class="a" style="left:45px;top:612px" width="10" height="10"><rect x="0.5" y="0.5" width="9" height="9" rx="1" fill="#f6f6f6" stroke="#9a9a9a"/><g transform="translate(0.5,0.5)"><path d="M2 4.5h5" stroke="#333"/><path d="M4.5 2v5" stroke="#333"/></g></svg>
<div class="a" style="left:62px;top:609px"><svg width="16" height="15"><rect x="1" y="1" width="14" height="13" fill="#f2f4f2" stroke="#d2d6d2"/><path d="M3 11q4-4 10-1" fill="none" stroke="#b5d2b9"/></svg></div>
<div class="t" style="left:82px;top:612px;font-size:11.5px">D201_DATUM</div>
<div class="a" style="left:50px;top:635px;width:11px;height:1px;border-top:1px dotted #8a8a8a"></div>
<svg class="a" style="left:45px;top:630px" width="10" height="10"><rect x="0.5" y="0.5" width="9" height="9" rx="1" fill="#f6f6f6" stroke="#9a9a9a"/><g transform="translate(0.5,0.5)"><path d="M2 4.5h5" stroke="#333"/><path d="M4.5 2v5" stroke="#333"/></g></svg>
<div class="a" style="left:62px;top:627px"><svg width="16" height="15"><rect x="1" y="1" width="14" height="13" fill="#f2f4f2" stroke="#d2d6d2"/><path d="M3 11q4-4 10-1" fill="none" stroke="#b5d2b9"/></svg></div>
<div class="t" style="left:82px;top:630px;font-size:11.5px">D202_MAIN</div>
<div class="a" style="left:50px;top:653px;width:11px;height:1px;border-top:1px dotted #8a8a8a"></div>
<svg class="a" style="left:45px;top:648px" width="10" height="10"><rect x="0.5" y="0.5" width="9" height="9" rx="1" fill="#f6f6f6" stroke="#9a9a9a"/><g transform="translate(0.5,0.5)"><path d="M2 4.5h5" stroke="#333"/><path d="M4.5 2v5" stroke="#333"/></g></svg>
<div class="a" style="left:62px;top:645px"><svg width="16" height="15"><rect x="1" y="1" width="14" height="13" fill="#f2f4f2" stroke="#d2d6d2"/><path d="M3 11q4-4 10-1" fill="none" stroke="#b5d2b9"/></svg></div>
<div class="t" style="left:82px;top:648px;font-size:11.5px">D203_MAIN2</div>
<div class="a" style="left:50px;top:671px;width:11px;height:1px;border-top:1px dotted #8a8a8a"></div>
<svg class="a" style="left:45px;top:666px" width="10" height="10"><rect x="0.5" y="0.5" width="9" height="9" rx="1" fill="#f6f6f6" stroke="#9a9a9a"/><g transform="translate(0.5,0.5)"><path d="M2 4.5h5" stroke="#333"/><path d="M4.5 2v5" stroke="#333"/></g></svg>
<div class="a" style="left:62px;top:663px"><svg width="16" height="15"><rect x="1" y="1" width="14" height="13" fill="#f2f4f2" stroke="#d2d6d2"/><path d="M3 11q4-4 10-1" fill="none" stroke="#b5d2b9"/></svg></div>
<div class="t" style="left:82px;top:666px;font-size:11.5px">D204_SECTION</div>
<div class="a" style="left:50px;top:689px;width:11px;height:1px;border-top:1px dotted #8a8a8a"></div>
<svg class="a" style="left:45px;top:684px" width="10" height="10"><rect x="0.5" y="0.5" width="9" height="9" rx="1" fill="#f6f6f6" stroke="#9a9a9a"/><g transform="translate(0.5,0.5)"><path d="M2 4.5h5" stroke="#333"/><path d="M4.5 2v5" stroke="#333"/></g></svg>
<div class="a" style="left:62px;top:681px"><svg width="16" height="15"><rect x="1" y="1" width="14" height="13" fill="#f2f4f2" stroke="#d2d6d2"/><path d="M3 11q4-4 10-1" fill="none" stroke="#b5d2b9"/></svg></div>
<div class="t" style="left:82px;top:684px;font-size:11.5px">D205_SECTION_A-A</div>
<div class="a" style="left:50px;top:707px;width:11px;height:1px;border-top:1px dotted #8a8a8a"></div>
<svg class="a" style="left:45px;top:702px" width="10" height="10"><rect x="0.5" y="0.5" width="9" height="9" rx="1" fill="#f6f6f6" stroke="#9a9a9a"/><g transform="translate(0.5,0.5)"><path d="M2 4.5h5" stroke="#333"/><path d="M4.5 2v5" stroke="#333"/></g></svg>
<div class="a" style="left:62px;top:699px"><svg width="16" height="15"><rect x="1" y="1" width="14" height="13" fill="#f2f4f2" stroke="#d2d6d2"/><path d="M3 11q4-4 10-1" fill="none" stroke="#b5d2b9"/></svg></div>
<div class="t" style="left:82px;top:702px;font-size:11.5px">D206_BASE_END</div>
<div class="a" style="left:50px;top:725px;width:11px;height:1px;border-top:1px dotted #8a8a8a"></div>
<svg class="a" style="left:45px;top:720px" width="10" height="10"><rect x="0.5" y="0.5" width="9" height="9" rx="1" fill="#f6f6f6" stroke="#9a9a9a"/><g transform="translate(0.5,0.5)"><path d="M2 4.5h5" stroke="#333"/><path d="M4.5 2v5" stroke="#333"/></g></svg>
<div class="a" style="left:62px;top:717px"><svg width="16" height="15"><rect x="1" y="1" width="14" height="13" fill="#f2f4f2" stroke="#d2d6d2"/><path d="M3 11q4-4 10-1" fill="none" stroke="#b5d2b9"/></svg></div>
<div class="t" style="left:82px;top:720px;font-size:11.5px">D207_SECTION_C-C</div>
<div class="a" style="left:50px;top:743px;width:11px;height:1px;border-top:1px dotted #8a8a8a"></div>
<svg class="a" style="left:45px;top:738px" width="10" height="10"><rect x="0.5" y="0.5" width="9" height="9" rx="1" fill="#f6f6f6" stroke="#9a9a9a"/><g transform="translate(0.5,0.5)"><path d="M2 4.5h5" stroke="#333"/><path d="M4.5 2v5" stroke="#333"/></g></svg>
<div class="a" style="left:62px;top:735px"><svg width="16" height="15"><rect x="1" y="1" width="14" height="13" fill="#f2f4f2" stroke="#d2d6d2"/><path d="M3 11q4-4 10-1" fill="none" stroke="#b5d2b9"/></svg></div>
<div class="t" style="left:82px;top:738px;font-size:11.5px">D208_SECTION_D-D</div>
<div class="a" style="left:50px;top:761px;width:11px;height:1px;border-top:1px dotted #8a8a8a"></div>
<svg class="a" style="left:45px;top:756px" width="10" height="10"><rect x="0.5" y="0.5" width="9" height="9" rx="1" fill="#f6f6f6" stroke="#9a9a9a"/><g transform="translate(0.5,0.5)"><path d="M2 4.5h5" stroke="#333"/><path d="M4.5 2v5" stroke="#333"/></g></svg>
<div class="a" style="left:62px;top:753px"><svg width="16" height="15"><rect x="1" y="1" width="14" height="13" fill="#f2f4f2" stroke="#d2d6d2"/><path d="M3 11q4-4 10-1" fill="none" stroke="#b5d2b9"/></svg></div>
<div class="t" style="left:82px;top:756px;font-size:11.5px">D209_SECTION_E-E</div>
<div class="a" style="left:50px;top:779px;width:11px;height:1px;border-top:1px dotted #8a8a8a"></div>
<svg class="a" style="left:45px;top:774px" width="10" height="10"><rect x="0.5" y="0.5" width="9" height="9" rx="1" fill="#f6f6f6" stroke="#9a9a9a"/><g transform="translate(0.5,0.5)"><path d="M2 4.5h5" stroke="#333"/><path d="M4.5 2v5" stroke="#333"/></g></svg>
<div class="a" style="left:62px;top:771px"><svg width="16" height="15"><rect x="1" y="1" width="14" height="13" fill="#f2f4f2" stroke="#d2d6d2"/><path d="M3 11q4-4 10-1" fill="none" stroke="#b5d2b9"/></svg></div>
<div class="t" style="left:82px;top:774px;font-size:11.5px">D210_SECTION_F-F</div>
<div class="a" style="left:50px;top:797px;width:11px;height:1px;border-top:1px dotted #8a8a8a"></div>
<svg class="a" style="left:45px;top:792px" width="10" height="10"><rect x="0.5" y="0.5" width="9" height="9" rx="1" fill="#f6f6f6" stroke="#9a9a9a"/><g transform="translate(0.5,0.5)"><path d="M2 4.5h5" stroke="#333"/><path d="M4.5 2v5" stroke="#333"/></g></svg>
<div class="a" style="left:62px;top:789px"><svg width="16" height="15"><rect x="1" y="1" width="14" height="13" fill="#f2f4f2" stroke="#d2d6d2"/><path d="M3 11q4-4 10-1" fill="none" stroke="#b5d2b9"/></svg></div>
<div class="t" style="left:82px;top:792px;font-size:11.5px">D211_SECTION_H-H</div>
<div class="a" style="left:50px;top:815px;width:11px;height:1px;border-top:1px dotted #8a8a8a"></div>
<svg class="a" style="left:45px;top:810px" width="10" height="10"><rect x="0.5" y="0.5" width="9" height="9" rx="1" fill="#f6f6f6" stroke="#9a9a9a"/><g transform="translate(0.5,0.5)"><path d="M2 4.5h5" stroke="#333"/><path d="M4.5 2v5" stroke="#333"/></g></svg>
<div class="a" style="left:62px;top:807px"><svg width="16" height="15"><rect x="1" y="1" width="14" height="13" fill="#f2f4f2" stroke="#d2d6d2"/><path d="M3 11q4-4 10-1" fill="none" stroke="#b5d2b9"/></svg></div>
<div class="t" style="left:82px;top:810px;font-size:11.5px">D212_BACK</div>
<div class="a" style="left:50px;top:833px;width:11px;height:1px;border-top:1px dotted #8a8a8a"></div>
<svg class="a" style="left:45px;top:828px" width="10" height="10"><rect x="0.5" y="0.5" width="9" height="9" rx="1" fill="#f6f6f6" stroke="#9a9a9a"/><g transform="translate(0.5,0.5)"><path d="M2 4.5h5" stroke="#333"/><path d="M4.5 2v5" stroke="#333"/></g></svg>
<div class="a" style="left:62px;top:825px"><svg width="16" height="15"><rect x="1" y="1" width="14" height="13" fill="#f2f4f2" stroke="#d2d6d2"/><path d="M3 11q4-4 10-1" fill="none" stroke="#b5d2b9"/></svg></div>
<div class="t" style="left:82px;top:828px;font-size:11.5px">D213_BACK2</div>
<div class="a" style="left:50px;top:851px;width:11px;height:1px;border-top:1px dotted #8a8a8a"></div>
<svg class="a" style="left:45px;top:846px" width="10" height="10"><rect x="0.5" y="0.5" width="9" height="9" rx="1" fill="#f6f6f6" stroke="#9a9a9a"/><g transform="translate(0.5,0.5)"><path d="M2 4.5h5" stroke="#333"/><path d="M4.5 2v5" stroke="#333"/></g></svg>
<div class="a" style="left:62px;top:843px"><svg width="16" height="15"><rect x="1" y="1" width="14" height="13" fill="#f2f4f2" stroke="#d2d6d2"/><path d="M3 11q4-4 10-1" fill="none" stroke="#b5d2b9"/></svg></div>
<div class="t" style="left:82px;top:846px;font-size:11.5px">D214_SIDE</div>
<div class="a" style="left:50px;top:869px;width:11px;height:1px;border-top:1px dotted #8a8a8a"></div>
<div class="a" style="left:62px;top:861px"><svg width="16" height="15"><rect x="1" y="1" width="14" height="13" fill="#f2f4f2" stroke="#d2d6d2"/><path d="M3 11q4-4 10-1" fill="none" stroke="#b5d2b9"/></svg></div>
<div class="t" style="left:82px;top:864px;font-size:11.5px">Front</div>
<div class="a" style="left:50px;top:887px;width:11px;height:1px;border-top:1px dotted #8a8a8a"></div>
<div class="a" style="left:62px;top:879px"><svg width="16" height="15"><rect x="1" y="1" width="14" height="13" fill="#f2f4f2" stroke="#d2d6d2"/><path d="M3 11q4-4 10-1" fill="none" stroke="#b5d2b9"/></svg></div>
<div class="t" style="left:82px;top:882px;font-size:11.5px">Isometric</div>
<div class="a" style="left:50px;top:905px;width:11px;height:1px;border-top:1px dotted #8a8a8a"></div>
<div class="a" style="left:62px;top:897px"><svg width="16" height="15"><rect x="1" y="1" width="14" height="13" fill="#f2f4f2" stroke="#d2d6d2"/><path d="M3 11q4-4 10-1" fill="none" stroke="#b5d2b9"/></svg></div>
<div class="t" style="left:82px;top:900px;font-size:11.5px">Left</div>
<div class="a" style="left:50px;top:923px;width:11px;height:1px;border-top:1px dotted #8a8a8a"></div>
<div class="a" style="left:62px;top:915px"><svg width="16" height="15"><rect x="1" y="1" width="14" height="13" fill="#f2f4f2" stroke="#d2d6d2"/><path d="M3 11q4-4 10-1" fill="none" stroke="#b5d2b9"/></svg></div>
<div class="t" style="left:82px;top:918px;font-size:11.5px">Right</div>
<div class="a" style="left:50px;top:941px;width:11px;height:1px;border-top:1px dotted #8a8a8a"></div>
<div class="a" style="left:62px;top:933px"><svg width="16" height="15"><rect x="1" y="1" width="14" height="13" fill="#f2f4f2" stroke="#d2d6d2"/><path d="M3 11q4-4 10-1" fill="none" stroke="#b5d2b9"/></svg></div>
<div class="t" style="left:82px;top:936px;font-size:11.5px">Top</div>
<div class="a" style="left:50px;top:959px;width:11px;height:1px;border-top:1px dotted #8a8a8a"></div>
<svg class="a" style="left:45px;top:954px" width="10" height="10"><rect x="0.5" y="0.5" width="9" height="9" rx="1" fill="#f6f6f6" stroke="#9a9a9a"/><g transform="translate(0.5,0.5)"><path d="M2 4.5h5" stroke="#333"/><path d="M4.5 2v5" stroke="#333"/></g></svg>
<div class="a" style="left:62px;top:951px"><svg width="16" height="15"><rect x="1" y="1" width="14" height="13" fill="#f2f4f2" stroke="#d2d6d2"/><path d="M3 11q4-4 10-1" fill="none" stroke="#b5d2b9"/></svg></div>
<div class="t" style="left:82px;top:954px;font-size:11.5px">Trimetric</div>
<div class="a" style="left:50px;top:977px;width:11px;height:1px;border-top:1px dotted #8a8a8a"></div>
<svg class="a" style="left:45px;top:972px" width="10" height="10"><rect x="0.5" y="0.5" width="9" height="9" rx="1" fill="#f6f6f6" stroke="#9a9a9a"/><g transform="translate(0.5,0.5)"><path d="M2 4.5h5" stroke="#333"/><path d="M4.5 2v5" stroke="#333"/></g></svg>
<div class="a" style="left:62px;top:969px"><svg width="16" height="15"><rect x="1" y="1" width="14" height="13" fill="#e0ecf6" stroke="#777"/><path d="M3 11q4-4 10-1v2H3z" fill="#8fc09a"/></svg></div>
<div class="t" style="left:82px;top:972px;font-size:11.5px">View 40667</div>
<div class="a" style="left:31px;top:995px;width:11px;height:1px;border-top:1px dotted #8a8a8a"></div>
<svg class="a" style="left:26px;top:990px" width="10" height="10"><rect x="0.5" y="0.5" width="9" height="9" rx="1" fill="#f6f6f6" stroke="#9a9a9a"/><g transform="translate(0.5,0.5)"><path d="M2 4.5h5" stroke="#333"/><path d="M4.5 2v5" stroke="#333"/></g></svg>
<div class="a" style="left:43px;top:987px"><svg width="16" height="16"><rect x="1" y="1" width="14" height="3" fill="#f0f0f0" stroke="#c8c8c8"/><rect x="1" y="5" width="14" height="10" fill="#eef3ee" stroke="#c8c8c8"/><path d="M2 13h12" stroke="#88c090" stroke-width="2"/></svg></div>
<div class="t" style="left:63px;top:990px;font-size:11.5px">Annotation Views</div>
<!-- DOC TAB HEADER -->
<div class="a" style="left:257px;top:138px;width:981px;height:23px;background:linear-gradient(#c8dcf3,#bfd5f0)"></div>
<svg class="a" style="left:262px;top:140px" width="276" height="21"><path d="M0.5 20.5 L16 1.5 H272.5 V20.5 Z" fill="url(#tabg)" stroke="#b4c8e2"/><defs><linearGradient id="tabg" x1="0" y1="0" x2="0" y2="1"><stop offset="0" stop-color="#f3f9fe"/><stop offset="0.45" stop-color="#eef6fd"/><stop offset="0.5" stop-color="#d3e0f1"/><stop offset="1" stop-color="#c9d9ee"/></linearGradient></defs></svg>
<div class="t" style="left:295px;top:144px;font-size:11px;font-weight:bold;color:#111">RR_Pump_Body_Housing_NX11a.pundit *</div>
<svg class="a" style="left:522px;top:145px" width="10" height="9"><path d="M1 1L9 8M9 1L1 8" stroke="#5a6f8c" stroke-width="1.2"/></svg>
<svg class="a" style="left:1221px;top:146px" width="10" height="6"><path d="M0 0h9l-4.5 5z" fill="#5a6f8c"/></svg>
<div class="a" style="left:263px;top:160px;width:975px;height:655px;background:#fdfdfb;border-left:1px solid #a8bcd8;border-top:1px solid #a8bcd8"></div>
<!-- VIEW3D -->
<svg class="a" style="left:264px;top:161px" width="969" height="650" viewBox="264 161 969 650">
<defs>
<clipPath id="bc"><path id="bodyp" d="M784 161 L1190 161 L1190 224 L1186 230 L1184 277 L1179 308 L1167 359 L1155 385 L1135 535 L1135 553 L1141 563 L1138 580 L1124 620 L1121 668 L1187 720 L1233 735 L1235 811 L890 811 L890 770 L869 767 L850 758 L832 735 L822 705 L820 670 L822 625 L817 580 L808 537 L803 470 L796 411 L792 350 L790 311 L784 266 L781 222 Z"/></clipPath>
<radialGradient id="hl" cx="0.5" cy="0.5" r="0.5"><stop offset="0" stop-color="#7d9ee8" stop-opacity="0.75"/><stop offset="0.6" stop-color="#5a82d6" stop-opacity="0.4"/><stop offset="1" stop-color="#3a63c6" stop-opacity="0"/></radialGradient>
<radialGradient id="dk" cx="0.5" cy="0.5" r="0.5"><stop offset="0" stop-color="#16307a" stop-opacity="0.6"/><stop offset="0.6" stop-color="#1a3886" stop-opacity="0.3"/><stop offset="1" stop-color="#1a3a90" stop-opacity="0"/></radialGradient>
<linearGradient id="or1" x1="0" y1="0" x2="0" y2="1"><stop offset="0" stop-color="#c96a10"/><stop offset="0.25" stop-color="#de7f16"/><stop offset="0.45" stop-color="#e88c1e"/><stop offset="0.6" stop-color="#c66a0e"/><stop offset="0.8" stop-color="#a85808"/><stop offset="0.93" stop-color="#7a3c08"/><stop offset="1" stop-color="#5a2a08"/></linearGradient>
<linearGradient id="or2" x1="0" y1="0" x2="1" y2="0"><stop offset="0" stop-color="#e6841a"/><stop offset="0.6" stop-color="#f2962a"/><stop offset="1" stop-color="#e48418"/></linearGradient>
<linearGradient id="strip" x1="0" y1="0" x2="1" y2="0"><stop offset="0" stop-color="#8aaaf0" stop-opacity="0"/><stop offset="0.5" stop-color="#8aaaf0" stop-opacity="0.85"/><stop offset="1" stop-color="#8aaaf0" stop-opacity="0"/></linearGradient>
</defs>
<use href="#bodyp" fill="#2f57ba"/>
<g clip-path="url(#bc)">
<path d="M1121 668 L1187 720 L1235 735 L1235 811 L950 811 L930 760 L960 700 L1000 672 Z" fill="#2a4ca8" opacity="0.3"/>
<rect x="796" y="222" width="30" height="130" fill="url(#strip)" opacity="0.7"/>
<rect x="1005" y="600" width="10" height="130" fill="url(#strip)" opacity="0.9"/>
<rect x="880" y="520" width="25" height="60" fill="url(#strip)" opacity="0.5"/>
<rect x="1080" y="170" width="40" height="60" fill="url(#strip)" opacity="0.6"/>
<rect x="1150" y="175" width="30" height="50" fill="url(#strip)" opacity="0.5"/>
<rect x="1095" y="200" width="20" height="40" fill="url(#strip)" opacity="0.5"/>
<rect x="840" y="170" width="20" height="40" fill="url(#strip)" opacity="0.4"/>
<rect x="970" y="640" width="12" height="60" fill="url(#strip)" opacity="0.6"/>
<rect x="925" y="700" width="10" height="40" fill="url(#strip)" opacity="0.5"/>
<rect x="1060" y="600" width="20" height="60" fill="url(#strip)" opacity="0.5"/>
<rect x="1040" y="490" width="20" height="60" fill="url(#strip)" opacity="0.5"/>
<rect x="1100" y="480" width="15" height="60" fill="url(#strip)" opacity="0.4"/>
<rect x="818" y="440" width="18" height="80" fill="url(#strip)" opacity="0.5"/>
<ellipse cx="912" cy="525" rx="22" ry="30" fill="url(#hl)"/>
<ellipse cx="1010" cy="530" rx="40" ry="35" fill="url(#dk)"/>
<ellipse cx="1000" cy="418" rx="45" ry="25" fill="url(#dk)"/>
<ellipse cx="1040" cy="195" rx="30" ry="25" fill="url(#dk)"/>
<ellipse cx="1045" cy="330" rx="25" ry="18" fill="url(#dk)"/>
<ellipse cx="1072" cy="262" rx="25" ry="20" fill="url(#dk)"/>
<ellipse cx="860" cy="420" rx="30" ry="25" fill="url(#dk)"/>
<ellipse cx="860" cy="600" rx="40" ry="18" fill="url(#dk)"/>
<ellipse cx="1058" cy="405" rx="20" ry="35" fill="url(#hl)"/>
<ellipse cx="1110" cy="590" rx="20" ry="20" fill="url(#hl)"/>
<ellipse cx="1090" cy="740" rx="40" ry="20" fill="url(#dk)"/>
<ellipse cx="1120" cy="690" rx="40" ry="18" fill="url(#dk)"/>
<ellipse cx="1180" cy="740" rx="40" ry="15" fill="url(#dk)"/>
<ellipse cx="1155" cy="780" rx="30" ry="20" fill="url(#hl)"/>
<ellipse cx="950" cy="790" rx="30" ry="20" fill="url(#dk)"/>
<ellipse cx="1080" cy="535" rx="25" ry="40" fill="url(#hl)"/>
<ellipse cx="1045" cy="660" rx="18" ry="20" fill="url(#hl)"/>
<ellipse cx="1095" cy="660" rx="12" ry="25" fill="url(#hl)"/>
<ellipse cx="900" cy="630" rx="25" ry="25" fill="url(#dk)"/>
<ellipse cx="1000" cy="700" rx="30" ry="20" fill="url(#dk)"/>
<ellipse cx="975" cy="458" rx="30" ry="20" fill="url(#hl)"/>
<ellipse cx="1080" cy="195" rx="30" ry="18" fill="url(#hl)"/>
<path d="M1040 668 Q1080 640 1121 668 L1187 720 L1233 735 L1233 760 Q1160 740 1120 720 Q1070 700 1040 668 Z" fill="#1f3e96" opacity="0.4"/>
<path d="M1040 668 Q1000 690 1000 730 Q1005 760 1060 780" fill="none" stroke="#15296a" stroke-width="1"/>
<path d="M1040 668 L1110 700 Q1150 715 1230 740" fill="none" stroke="#15296a" stroke-width="0.8"/>
<path d="M940 672 Q930 620 942 600" fill="none" stroke="#15296a" stroke-width="0.8"/>
<ellipse cx="991" cy="744" rx="12" ry="18" fill="#2a4ea6" stroke="#0e1f55" stroke-width="1"/><ellipse cx="995" cy="744" rx="6" ry="12" fill="#5c82d8" opacity="0.6"/>
<path d="M955 712 Q985 700 1008 712 Q1030 740 1010 775 Q980 790 955 770 Z" fill="none" stroke="#1a3280" stroke-width="0.8"/>
<ellipse cx="976" cy="250" rx="48" ry="96" fill="#2f57ba" stroke="#13265e" stroke-width="1"/>
<ellipse cx="982" cy="246" rx="42" ry="88" fill="#3159bc" stroke="#13265e" stroke-width="1"/>
<ellipse cx="985" cy="244" rx="39" ry="84" fill="#4a72cf" stroke="#13265e" stroke-width="1"/>
<ellipse cx="994" cy="238" rx="28" ry="73" fill="#3360c2" stroke="#13265e" stroke-width="1"/>
<line x1="1013" y1="237" x2="1012" y2="300" stroke="#111" stroke-width="1.1"/>
<path d="M868 161 L939 161 C926 200 922 255 935 290 C945 318 958 336 975 346 C968 352 958 355 951 355 C915 350 885 322 873 285 C868 265 868 240 868 161 Z" fill="url(#or1)" stroke="#2a1a10" stroke-width="0.8"/>
<path d="M1118 226 L1160 232 L1139 380 L1121 556 Q1096 568 1071 552 L1093 375 Z" fill="url(#or2)"/>
<path d="M1071 552 Q1096 570 1121 556 L1141 563 Q1100 592 1066 556 Z" fill="#102058" opacity="0.85"/>
<path d="M1071 552 Q1096 540 1121 556" fill="none" stroke="#3a2a10" stroke-width="0.8"/>
<path d="M900 615 Q925 640 944 677 Q946 710 929 740 Q915 755 900 757 L869 767 Z" fill="#2c52ae" stroke="#13265e" stroke-width="0.8"/>
<ellipse cx="871" cy="686" rx="51" ry="81" transform="rotate(-6 871 686)" fill="#3059bc" stroke="#13265e" stroke-width="1"/>
<ellipse cx="874" cy="685" rx="27" ry="45" transform="rotate(-6 874 685)" fill="#2a4fa8" stroke="#13265e" stroke-width="1"/>
<ellipse cx="880" cy="685" rx="19" ry="38" transform="rotate(-6 880 685)" fill="#3960c0" stroke="#13265e" stroke-width="0.8"/>
<ellipse cx="886" cy="690" rx="10" ry="22" fill="url(#hl)"/>
<ellipse cx="853" cy="520" rx="5" ry="8" fill="#264a9e" stroke="#0e1f55" stroke-width="0.8"/>
<ellipse cx="1061" cy="200" rx="8" ry="14" fill="#264a9e" stroke="#0e1f55" stroke-width="0.8"/>
<ellipse cx="1178" cy="432" rx="8" ry="12" fill="#264a9e" stroke="#0e1f55" stroke-width="0.8"/>
</g>
<ellipse cx="800" cy="376" rx="15" ry="21" fill="#e4464c"/>
<circle cx="985.9" cy="182.1" r="2.1" fill="#e8454c"/>
<circle cx="998.8" cy="181.9" r="2.1" fill="#e8454c"/>
<circle cx="980.0" cy="194.2" r="2.1" fill="#e8454c"/>
<circle cx="991.4" cy="194.0" r="2.1" fill="#e8454c"/>
<circle cx="1004.3" cy="194.6" r="2.1" fill="#e8454c"/>
<circle cx="973.2" cy="205.6" r="2.1" fill="#e8454c"/>
<circle cx="985.2" cy="206.6" r="2.1" fill="#e8454c"/>
<circle cx="998.4" cy="205.1" r="2.1" fill="#e8454c"/>
<circle cx="1011.0" cy="206.9" r="2.1" fill="#e8454c"/>
<circle cx="980.3" cy="218.2" r="2.1" fill="#e8454c"/>
<circle cx="991.3" cy="217.0" r="2.1" fill="#e8454c"/>
<circle cx="1004.1" cy="217.1" r="2.1" fill="#e8454c"/>
<circle cx="1015.4" cy="217.5" r="2.1" fill="#e8454c"/>
<circle cx="973.1" cy="229.9" r="2.1" fill="#e8454c"/>
<circle cx="985.9" cy="230.7" r="2.1" fill="#e8454c"/>
<circle cx="998.0" cy="230.3" r="2.1" fill="#e8454c"/>
<circle cx="1010.0" cy="230.3" r="2.1" fill="#e8454c"/>
<circle cx="979.9" cy="241.6" r="2.1" fill="#e8454c"/>
<circle cx="993.0" cy="243.0" r="2.1" fill="#e8454c"/>
<circle cx="1004.7" cy="242.4" r="2.1" fill="#e8454c"/>
<circle cx="1015.6" cy="241.5" r="2.1" fill="#e8454c"/>
<circle cx="973.6" cy="253.1" r="2.1" fill="#e8454c"/>
<circle cx="986.5" cy="253.8" r="2.1" fill="#e8454c"/>
<circle cx="998.7" cy="253.8" r="2.1" fill="#e8454c"/>
<circle cx="1010.9" cy="254.7" r="2.1" fill="#e8454c"/>
<circle cx="979.0" cy="265.4" r="2.1" fill="#e8454c"/>
<circle cx="992.8" cy="265.9" r="2.1" fill="#e8454c"/>
<circle cx="1005.0" cy="265.8" r="2.1" fill="#e8454c"/>
<circle cx="1015.1" cy="266.3" r="2.1" fill="#e8454c"/>
<circle cx="974.6" cy="277.5" r="2.1" fill="#e8454c"/>
<circle cx="985.2" cy="277.7" r="2.1" fill="#e8454c"/>
<circle cx="998.9" cy="278.5" r="2.1" fill="#e8454c"/>
<circle cx="1009.2" cy="277.5" r="2.1" fill="#e8454c"/>
<circle cx="979.2" cy="289.1" r="2.1" fill="#e8454c"/>
<circle cx="992.6" cy="289.4" r="2.1" fill="#e8454c"/>
<circle cx="1004.1" cy="289.9" r="2.1" fill="#e8454c"/>
<circle cx="985.4" cy="302.5" r="2.1" fill="#e8454c"/>
<circle cx="997.3" cy="302.3" r="2.1" fill="#e8454c"/>
<circle cx="784.0" cy="220.0" r="2.1" fill="#e8454c"/>
<circle cx="784.6" cy="231.5" r="2.1" fill="#e8454c"/>
<circle cx="785.2" cy="243.0" r="2.1" fill="#e8454c"/>
<circle cx="785.8" cy="254.5" r="2.1" fill="#e8454c"/>
<circle cx="786.4" cy="266.0" r="2.1" fill="#e8454c"/>
<circle cx="787.0" cy="277.5" r="2.1" fill="#e8454c"/>
<circle cx="787.6" cy="289.0" r="2.1" fill="#e8454c"/>
<circle cx="788.2" cy="300.5" r="2.1" fill="#e8454c"/>
<circle cx="788.8" cy="312.0" r="2.1" fill="#e8454c"/>
<circle cx="789.4" cy="323.5" r="2.1" fill="#e8454c"/>
<circle cx="790.0" cy="335.0" r="2.1" fill="#e8454c"/>
<circle cx="790.6" cy="346.5" r="2.1" fill="#e8454c"/>
<circle cx="808.0" cy="255.0" r="2.1" fill="#e8454c"/>
<circle cx="808.9" cy="267.0" r="2.1" fill="#e8454c"/>
<circle cx="809.8" cy="279.0" r="2.1" fill="#e8454c"/>
<circle cx="810.7" cy="291.0" r="2.1" fill="#e8454c"/>
<circle cx="811.6" cy="303.0" r="2.1" fill="#e8454c"/>
<circle cx="812.5" cy="315.0" r="2.1" fill="#e8454c"/>
<circle cx="813.4" cy="327.0" r="2.1" fill="#e8454c"/>
<circle cx="814.3" cy="339.0" r="2.1" fill="#e8454c"/>
<circle cx="815.2" cy="351.0" r="2.1" fill="#e8454c"/>
<circle cx="798.5" cy="409.8" r="2.1" fill="#e8454c"/>
<circle cx="800.3" cy="423.3" r="2.1" fill="#e8454c"/>
<circle cx="804.7" cy="438.9" r="2.1" fill="#e8454c"/>
<circle cx="803.4" cy="453.2" r="2.1" fill="#e8454c"/>
<circle cx="812.8" cy="409.7" r="2.1" fill="#e8454c"/>
<circle cx="816.8" cy="424.4" r="2.1" fill="#e8454c"/>
<circle cx="815.2" cy="439.5" r="2.1" fill="#e8454c"/>
<circle cx="817.1" cy="451.3" r="2.1" fill="#e8454c"/>
<circle cx="829.1" cy="409.5" r="2.1" fill="#e8454c"/>
<circle cx="828.6" cy="422.7" r="2.1" fill="#e8454c"/>
<circle cx="829.2" cy="438.2" r="2.1" fill="#e8454c"/>
<circle cx="831.2" cy="452.3" r="2.1" fill="#e8454c"/>
<circle cx="841.5" cy="409.9" r="2.1" fill="#e8454c"/>
<circle cx="845.2" cy="424.0" r="2.1" fill="#e8454c"/>
<circle cx="845.1" cy="439.1" r="2.1" fill="#e8454c"/>
<circle cx="844.9" cy="451.0" r="2.1" fill="#e8454c"/>
<circle cx="812.0" cy="472.0" r="2.1" fill="#e8454c"/>
<circle cx="812.8" cy="485.0" r="2.1" fill="#e8454c"/>
<circle cx="813.6" cy="498.0" r="2.1" fill="#e8454c"/>
<circle cx="814.4" cy="511.0" r="2.1" fill="#e8454c"/>
<circle cx="815.2" cy="524.0" r="2.1" fill="#e8454c"/>
<circle cx="816.0" cy="537.0" r="2.1" fill="#e8454c"/>
<circle cx="816.8" cy="550.0" r="2.1" fill="#e8454c"/>
<circle cx="817.6" cy="563.0" r="2.1" fill="#e8454c"/>
<circle cx="929.5" cy="574.1" r="2.1" fill="#e8454c"/>
<circle cx="920.1" cy="580.0" r="2.1" fill="#e8454c"/>
<circle cx="910.0" cy="582.0" r="2.1" fill="#e8454c"/>
<circle cx="899.8" cy="580.0" r="2.1" fill="#e8454c"/>
<circle cx="890.5" cy="574.1" r="2.1" fill="#e8454c"/>
<circle cx="882.8" cy="564.7" r="2.1" fill="#e8454c"/>
<circle cx="877.2" cy="552.8" r="2.1" fill="#e8454c"/>
<circle cx="874.4" cy="539.1" r="2.1" fill="#e8454c"/>
<circle cx="874.4" cy="524.9" r="2.1" fill="#e8454c"/>
<circle cx="877.3" cy="511.2" r="2.1" fill="#e8454c"/>
<circle cx="882.8" cy="499.2" r="2.1" fill="#e8454c"/>
<circle cx="890.5" cy="489.9" r="2.1" fill="#e8454c"/>
<circle cx="899.9" cy="484.0" r="2.1" fill="#e8454c"/>
<circle cx="910.0" cy="482.0" r="2.1" fill="#e8454c"/>
<circle cx="920.2" cy="484.0" r="2.1" fill="#e8454c"/>
<circle cx="929.5" cy="489.9" r="2.1" fill="#e8454c"/>
<circle cx="937.2" cy="499.3" r="2.1" fill="#e8454c"/>
<circle cx="942.8" cy="511.2" r="2.1" fill="#e8454c"/>
<circle cx="945.6" cy="524.9" r="2.1" fill="#e8454c"/>
<circle cx="945.6" cy="539.1" r="2.1" fill="#e8454c"/>
<circle cx="942.7" cy="552.8" r="2.1" fill="#e8454c"/>
<circle cx="937.2" cy="564.8" r="2.1" fill="#e8454c"/>
<circle cx="929.5" cy="555.7" r="2.1" fill="#e8454c"/>
<circle cx="921.5" cy="564.3" r="2.1" fill="#e8454c"/>
<circle cx="911.7" cy="567.9" r="2.1" fill="#e8454c"/>
<circle cx="901.7" cy="566.1" r="2.1" fill="#e8454c"/>
<circle cx="892.9" cy="559.1" r="2.1" fill="#e8454c"/>
<circle cx="886.8" cy="547.9" r="2.1" fill="#e8454c"/>
<circle cx="884.1" cy="534.4" r="2.1" fill="#e8454c"/>
<circle cx="885.5" cy="520.4" r="2.1" fill="#e8454c"/>
<circle cx="890.5" cy="508.3" r="2.1" fill="#e8454c"/>
<circle cx="898.5" cy="499.7" r="2.1" fill="#e8454c"/>
<circle cx="908.3" cy="496.1" r="2.1" fill="#e8454c"/>
<circle cx="918.3" cy="497.9" r="2.1" fill="#e8454c"/>
<circle cx="927.1" cy="504.9" r="2.1" fill="#e8454c"/>
<circle cx="933.2" cy="516.1" r="2.1" fill="#e8454c"/>
<circle cx="935.9" cy="529.6" r="2.1" fill="#e8454c"/>
<circle cx="934.5" cy="543.6" r="2.1" fill="#e8454c"/>
<circle cx="924.6" cy="541.8" r="2.1" fill="#e8454c"/>
<circle cx="917.7" cy="551.8" r="2.1" fill="#e8454c"/>
<circle cx="907.8" cy="554.3" r="2.1" fill="#e8454c"/>
<circle cx="898.8" cy="548.2" r="2.1" fill="#e8454c"/>
<circle cx="894.1" cy="536.0" r="2.1" fill="#e8454c"/>
<circle cx="895.4" cy="522.2" r="2.1" fill="#e8454c"/>
<circle cx="902.3" cy="512.2" r="2.1" fill="#e8454c"/>
<circle cx="912.2" cy="509.7" r="2.1" fill="#e8454c"/>
<circle cx="921.2" cy="515.8" r="2.1" fill="#e8454c"/>
<circle cx="925.9" cy="528.0" r="2.1" fill="#e8454c"/>
<circle cx="907.7" cy="686.0" r="2.1" fill="#e8454c"/>
<circle cx="906.2" cy="702.4" r="2.1" fill="#e8454c"/>
<circle cx="901.9" cy="717.5" r="2.1" fill="#e8454c"/>
<circle cx="895.0" cy="730.1" r="2.1" fill="#e8454c"/>
<circle cx="886.3" cy="739.0" r="2.1" fill="#e8454c"/>
<circle cx="876.2" cy="743.7" r="2.1" fill="#e8454c"/>
<circle cx="865.8" cy="743.7" r="2.1" fill="#e8454c"/>
<circle cx="855.7" cy="739.0" r="2.1" fill="#e8454c"/>
<circle cx="847.0" cy="730.1" r="2.1" fill="#e8454c"/>
<circle cx="840.1" cy="717.5" r="2.1" fill="#e8454c"/>
<circle cx="835.8" cy="702.4" r="2.1" fill="#e8454c"/>
<circle cx="834.3" cy="686.0" r="2.1" fill="#e8454c"/>
<circle cx="835.8" cy="669.6" r="2.1" fill="#e8454c"/>
<circle cx="840.1" cy="654.5" r="2.1" fill="#e8454c"/>
<circle cx="847.0" cy="641.9" r="2.1" fill="#e8454c"/>
<circle cx="855.7" cy="633.0" r="2.1" fill="#e8454c"/>
<circle cx="865.8" cy="628.3" r="2.1" fill="#e8454c"/>
<circle cx="876.2" cy="628.3" r="2.1" fill="#e8454c"/>
<circle cx="886.3" cy="633.0" r="2.1" fill="#e8454c"/>
<circle cx="895.0" cy="641.9" r="2.1" fill="#e8454c"/>
<circle cx="901.9" cy="654.5" r="2.1" fill="#e8454c"/>
<circle cx="906.2" cy="669.6" r="2.1" fill="#e8454c"/>
<circle cx="914.9" cy="686.0" r="2.1" fill="#e8454c"/>
<circle cx="913.8" cy="701.5" r="2.1" fill="#e8454c"/>
<circle cx="910.5" cy="716.2" r="2.1" fill="#e8454c"/>
<circle cx="905.3" cy="729.4" r="2.1" fill="#e8454c"/>
<circle cx="898.3" cy="740.5" r="2.1" fill="#e8454c"/>
<circle cx="890.0" cy="748.8" r="2.1" fill="#e8454c"/>
<circle cx="880.8" cy="753.9" r="2.1" fill="#e8454c"/>
<circle cx="871.0" cy="755.7" r="2.1" fill="#e8454c"/>
<circle cx="861.2" cy="753.9" r="2.1" fill="#e8454c"/>
<circle cx="852.0" cy="748.8" r="2.1" fill="#e8454c"/>
<circle cx="843.7" cy="740.5" r="2.1" fill="#e8454c"/>
<circle cx="836.7" cy="729.4" r="2.1" fill="#e8454c"/>
<circle cx="831.5" cy="716.2" r="2.1" fill="#e8454c"/>
<circle cx="828.2" cy="701.5" r="2.1" fill="#e8454c"/>
<circle cx="827.1" cy="686.0" r="2.1" fill="#e8454c"/>
<circle cx="828.2" cy="670.5" r="2.1" fill="#e8454c"/>
<circle cx="831.5" cy="655.8" r="2.1" fill="#e8454c"/>
<circle cx="836.7" cy="642.6" r="2.1" fill="#e8454c"/>
<circle cx="843.7" cy="631.5" r="2.1" fill="#e8454c"/>
<circle cx="852.0" cy="623.2" r="2.1" fill="#e8454c"/>
<circle cx="861.2" cy="618.1" r="2.1" fill="#e8454c"/>
<circle cx="871.0" cy="616.3" r="2.1" fill="#e8454c"/>
<circle cx="880.8" cy="618.1" r="2.1" fill="#e8454c"/>
<circle cx="890.0" cy="623.2" r="2.1" fill="#e8454c"/>
<circle cx="898.3" cy="631.5" r="2.1" fill="#e8454c"/>
<circle cx="905.3" cy="642.6" r="2.1" fill="#e8454c"/>
<circle cx="910.5" cy="655.8" r="2.1" fill="#e8454c"/>
<circle cx="913.8" cy="670.5" r="2.1" fill="#e8454c"/>
<circle cx="904.0" cy="685.0" r="2.1" fill="#e8454c"/>
<circle cx="902.2" cy="701.4" r="2.1" fill="#e8454c"/>
<circle cx="897.0" cy="715.9" r="2.1" fill="#e8454c"/>
<circle cx="889.0" cy="726.6" r="2.1" fill="#e8454c"/>
<circle cx="879.2" cy="732.3" r="2.1" fill="#e8454c"/>
<circle cx="868.8" cy="732.3" r="2.1" fill="#e8454c"/>
<circle cx="859.0" cy="726.6" r="2.1" fill="#e8454c"/>
<circle cx="851.0" cy="715.9" r="2.1" fill="#e8454c"/>
<circle cx="845.8" cy="701.4" r="2.1" fill="#e8454c"/>
<circle cx="844.0" cy="685.0" r="2.1" fill="#e8454c"/>
<circle cx="845.8" cy="668.6" r="2.1" fill="#e8454c"/>
<circle cx="851.0" cy="654.1" r="2.1" fill="#e8454c"/>
<circle cx="859.0" cy="643.4" r="2.1" fill="#e8454c"/>
<circle cx="868.8" cy="637.7" r="2.1" fill="#e8454c"/>
<circle cx="879.2" cy="637.7" r="2.1" fill="#e8454c"/>
<circle cx="889.0" cy="643.4" r="2.1" fill="#e8454c"/>
<circle cx="897.0" cy="654.1" r="2.1" fill="#e8454c"/>
<circle cx="902.2" cy="668.6" r="2.1" fill="#e8454c"/>
<circle cx="999.9" cy="451.8" r="2.1" fill="#e8454c"/>
<circle cx="927.4" cy="389.0" r="2.1" fill="#e8454c"/>
<circle cx="981.3" cy="464.0" r="2.1" fill="#e8454c"/>
<circle cx="921.6" cy="465.0" r="2.1" fill="#e8454c"/>
<circle cx="997.0" cy="430.4" r="2.1" fill="#e8454c"/>
<circle cx="946.4" cy="380.4" r="2.1" fill="#e8454c"/>
<circle cx="904.3" cy="466.3" r="2.1" fill="#e8454c"/>
<circle cx="926.2" cy="440.5" r="2.1" fill="#e8454c"/>
<circle cx="928.3" cy="452.4" r="2.1" fill="#e8454c"/>
<circle cx="965.6" cy="399.3" r="2.1" fill="#e8454c"/>
<circle cx="919.3" cy="442.0" r="2.1" fill="#e8454c"/>
<circle cx="907.6" cy="392.8" r="2.1" fill="#e8454c"/>
<circle cx="961.5" cy="455.2" r="2.1" fill="#e8454c"/>
<circle cx="967.6" cy="398.0" r="2.1" fill="#e8454c"/>
<circle cx="1000.9" cy="390.4" r="2.1" fill="#e8454c"/>
<circle cx="901.8" cy="396.9" r="2.1" fill="#e8454c"/>
<circle cx="1018.9" cy="187.3" r="2.1" fill="#e8454c"/>
<circle cx="1013.5" cy="224.3" r="2.1" fill="#e8454c"/>
<circle cx="1021.4" cy="195.8" r="2.1" fill="#e8454c"/>
<circle cx="832.2" cy="218.3" r="2.1" fill="#e8454c"/>
<circle cx="844.6" cy="210.3" r="2.1" fill="#e8454c"/>
<circle cx="838.8" cy="207.9" r="2.1" fill="#e8454c"/>
<circle cx="827.8" cy="189.2" r="2.1" fill="#e8454c"/>
<circle cx="825.4" cy="218.9" r="2.1" fill="#e8454c"/>
<circle cx="839.0" cy="220.7" r="2.1" fill="#e8454c"/>
<circle cx="848.4" cy="350.9" r="2.1" fill="#e8454c"/>
<circle cx="857.6" cy="354.3" r="2.1" fill="#e8454c"/>
<circle cx="854.4" cy="364.0" r="2.1" fill="#e8454c"/>
<circle cx="849.5" cy="347.7" r="2.1" fill="#e8454c"/>
<circle cx="862.7" cy="360.4" r="2.1" fill="#e8454c"/>
<circle cx="862.7" cy="353.3" r="2.1" fill="#e8454c"/>
<circle cx="863.9" cy="360.9" r="2.1" fill="#e8454c"/>
<circle cx="855.0" cy="352.7" r="2.1" fill="#e8454c"/>
<circle cx="930.5" cy="806.0" r="2.1" fill="#e8454c"/>
<circle cx="908.8" cy="802.8" r="2.1" fill="#e8454c"/>
<circle cx="928.9" cy="794.3" r="2.1" fill="#e8454c"/>
<circle cx="918.1" cy="786.9" r="2.1" fill="#e8454c"/>
<circle cx="916.2" cy="795.7" r="2.1" fill="#e8454c"/>
<circle cx="893.6" cy="796.9" r="2.1" fill="#e8454c"/>
<circle cx="934.7" cy="806.3" r="2.1" fill="#e8454c"/>
<circle cx="922.8" cy="787.1" r="2.1" fill="#e8454c"/>
<circle cx="923.1" cy="794.7" r="2.1" fill="#e8454c"/>
<circle cx="909.8" cy="804.7" r="2.1" fill="#e8454c"/>
<circle cx="893.8" cy="801.3" r="2.1" fill="#e8454c"/>
<circle cx="891.3" cy="795.5" r="2.1" fill="#e8454c"/>
<circle cx="911.6" cy="781.0" r="2.1" fill="#e8454c"/>
<circle cx="921.4" cy="791.4" r="2.1" fill="#e8454c"/>
<circle cx="917.7" cy="807.9" r="2.1" fill="#e8454c"/>
<circle cx="901.5" cy="772.4" r="2.1" fill="#e8454c"/>
<circle cx="903.5" cy="798.4" r="2.1" fill="#e8454c"/>
<circle cx="899.1" cy="778.6" r="2.1" fill="#e8454c"/>
<circle cx="930.8" cy="797.7" r="2.1" fill="#e8454c"/>
<circle cx="909.9" cy="806.8" r="2.1" fill="#e8454c"/>
<circle cx="904.7" cy="798.0" r="2.1" fill="#e8454c"/>
<circle cx="898.9" cy="788.8" r="2.1" fill="#e8454c"/>
<circle cx="926.3" cy="807.7" r="2.1" fill="#e8454c"/>
<circle cx="929.6" cy="787.0" r="2.1" fill="#e8454c"/>
<circle cx="916.2" cy="784.3" r="2.1" fill="#e8454c"/>
<circle cx="896.1" cy="791.4" r="2.1" fill="#e8454c"/>
<circle cx="927.7" cy="805.1" r="2.1" fill="#e8454c"/>
<circle cx="922.0" cy="809.1" r="2.1" fill="#e8454c"/>
<circle cx="902.5" cy="778.6" r="2.1" fill="#e8454c"/>
<circle cx="910.3" cy="782.7" r="2.1" fill="#e8454c"/>
<circle cx="899.6" cy="788.1" r="2.1" fill="#e8454c"/>
<circle cx="918.2" cy="791.3" r="2.1" fill="#e8454c"/>
<circle cx="904.2" cy="804.7" r="2.1" fill="#e8454c"/>
<circle cx="934.2" cy="789.6" r="2.1" fill="#e8454c"/>
<circle cx="893.4" cy="773.2" r="2.1" fill="#e8454c"/>
<circle cx="954.3" cy="210.0" r="2.1" fill="#e8454c"/>
<circle cx="946.9" cy="336.9" r="2.1" fill="#e8454c"/>
<circle cx="928.9" cy="390.0" r="2.1" fill="#e8454c"/>
<circle cx="915.9" cy="232.6" r="2.1" fill="#e8454c"/>
<circle cx="935.5" cy="205.9" r="2.1" fill="#e8454c"/>
<line x1="872" y1="185" x2="935" y2="183" stroke="#e8454c" stroke-width="2.6" stroke-dasharray="2.6 2"/>
<line x1="868" y1="260" x2="930" y2="259" stroke="#e8454c" stroke-width="2.6" stroke-dasharray="2.6 2"/>
<line x1="887" y1="323" x2="952" y2="322" stroke="#e8454c" stroke-width="2.6" stroke-dasharray="2.6 2"/>
<line x1="1016" y1="162" x2="1058" y2="162" stroke="#e8454c" stroke-width="2.6" stroke-dasharray="2.6 2"/>
<line x1="862" y1="665" x2="900" y2="664" stroke="#e8454c" stroke-width="2.6" stroke-dasharray="2.6 2"/>
<line x1="864" y1="700" x2="900" y2="700" stroke="#e8454c" stroke-width="2.6" stroke-dasharray="2.6 2"/>
<line x1="864" y1="733" x2="898" y2="732" stroke="#e8454c" stroke-width="2.6" stroke-dasharray="2.6 2"/>
<line x1="920" y1="777" x2="957" y2="776" stroke="#e8454c" stroke-width="2.6" stroke-dasharray="2.6 2"/>
<line x1="956" y1="755" x2="978" y2="757" stroke="#e8454c" stroke-width="2.6" stroke-dasharray="2.6 2"/>
<line x1="905" y1="630" x2="925" y2="630" stroke="#e8454c" stroke-width="2.6" stroke-dasharray="2.6 2"/>
<line x1="982" y1="600" x2="994" y2="598" stroke="#e8454c" stroke-width="2.6" stroke-dasharray="2.6 2"/>
<line x1="1050" y1="405" x2="1070" y2="398" stroke="#e8454c" stroke-width="2.6" stroke-dasharray="2.6 2"/>
<line x1="264" y1="248" x2="944" y2="233" stroke="#111" stroke-width="1.1"/>
<line x1="711" y1="343" x2="800" y2="351" stroke="#111" stroke-width="1.1"/>
<line x1="796" y1="355" x2="943" y2="357" stroke="#111" stroke-width="1.1"/>
<line x1="700" y1="314" x2="711" y2="344" stroke="#111" stroke-width="1.1"/>
<line x1="711" y1="344" x2="738" y2="282" stroke="#111" stroke-width="1.1"/>
<line x1="270" y1="530" x2="293" y2="528" stroke="#111" stroke-width="1.1"/>
<line x1="270" y1="530" x2="265" y2="643" stroke="#111" stroke-width="1.1"/>
<line x1="265" y1="643" x2="877" y2="632" stroke="#111" stroke-width="1.1"/>
<line x1="265" y1="652" x2="873" y2="640" stroke="#111" stroke-width="1.1"/>
<line x1="265" y1="746" x2="868" y2="735" stroke="#111" stroke-width="1.1"/>
<line x1="265" y1="754" x2="868" y2="742" stroke="#111" stroke-width="1.1"/>
<line x1="622" y1="698" x2="639" y2="698" stroke="#111" stroke-width="1.1"/>
<line x1="622" y1="698" x2="633" y2="728" stroke="#111" stroke-width="1.1"/>
<line x1="633" y1="728" x2="659" y2="667" stroke="#111" stroke-width="1.1"/>
<line x1="633" y1="728" x2="868" y2="740" stroke="#111" stroke-width="1.1"/>
<line x1="497" y1="792" x2="513" y2="792" stroke="#111" stroke-width="1.1"/>
<line x1="497" y1="792" x2="503" y2="808" stroke="#111" stroke-width="1.1"/>
<line x1="513" y1="811" x2="534" y2="761" stroke="#111" stroke-width="1.1"/>
<line x1="580" y1="811" x2="868" y2="742" stroke="#111" stroke-width="1.1"/>
<line x1="677" y1="811" x2="868" y2="745" stroke="#111" stroke-width="1.1"/>
<line x1="740" y1="790" x2="868" y2="748" stroke="#111" stroke-width="1.1"/>
<line x1="760" y1="687" x2="777" y2="687" stroke="#111" stroke-width="1.1"/>
<line x1="760" y1="687" x2="770" y2="717" stroke="#111" stroke-width="1.1"/>
<line x1="770" y1="717" x2="797" y2="655" stroke="#111" stroke-width="1.1"/>
<line x1="770" y1="717" x2="867" y2="733" stroke="#111" stroke-width="1.1"/>
<line x1="807" y1="480" x2="923" y2="477" stroke="#111" stroke-width="1.1"/>
<line x1="790" y1="555" x2="818" y2="556" stroke="#111" stroke-width="1.1"/>
<line x1="818" y1="556" x2="890" y2="540" stroke="#111" stroke-width="1.1"/>
<line x1="825" y1="603" x2="850" y2="603" stroke="#111" stroke-width="1.1"/>
<line x1="850" y1="603" x2="900" y2="573" stroke="#111" stroke-width="1.1"/>
<line x1="814" y1="161" x2="814" y2="183" stroke="#111" stroke-width="1.1"/>
<line x1="812" y1="208" x2="805" y2="355" stroke="#111" stroke-width="1.1"/>
<line x1="825" y1="204" x2="847" y2="204" stroke="#111" stroke-width="1.1"/>
<line x1="1137" y1="553" x2="1219" y2="552" stroke="#111" stroke-width="1.1"/>
<line x1="1207" y1="310" x2="1207" y2="344" stroke="#111" stroke-width="1.1"/>
<line x1="847" y1="811" x2="870" y2="770" stroke="#111" stroke-width="1.1"/>
<line x1="867" y1="770" x2="867" y2="811" stroke="#111" stroke-width="1.1"/>
<line x1="873" y1="770" x2="873" y2="811" stroke="#111" stroke-width="1.1"/>
<line x1="881" y1="770" x2="881" y2="811" stroke="#111" stroke-width="1.1"/>
<line x1="887" y1="770" x2="887" y2="811" stroke="#111" stroke-width="1.1"/>
<line x1="893" y1="469" x2="891" y2="533" stroke="#111" stroke-width="1.1"/>
<line x1="937" y1="396" x2="936" y2="442" stroke="#111" stroke-width="1.1"/>
<path d="M801 343 L805 356 L809 343 Z" fill="#111"/>
<path d="M1201 310 L1214 310 L1207.5 325 Z" fill="#111"/>
<circle cx="890" cy="540" r="2" fill="#111"/><path d="M905 474 L919 477.5 L905 481 Z" fill="#111"/>
<g transform="rotate(-0.6 365 453)">
<rect x="264" y="437" width="202" height="33" fill="none" stroke="#111" stroke-width="1.1"/>
<line x1="277" y1="437" x2="277" y2="470" stroke="#111" stroke-width="1.1"/>
<line x1="351" y1="437" x2="351" y2="470" stroke="#111" stroke-width="1.1"/>
<line x1="379" y1="437" x2="379" y2="470" stroke="#111" stroke-width="1.1"/>
<line x1="421" y1="437" x2="421" y2="470" stroke="#111" stroke-width="1.1"/>
</g>
<g transform="rotate(-0.6 410 571)">
<rect x="295" y="555" width="230" height="34" fill="none" stroke="#111" stroke-width="1.1"/>
<line x1="336" y1="555" x2="336" y2="589" stroke="#111" stroke-width="1.1"/>
<line x1="410" y1="555" x2="410" y2="589" stroke="#111" stroke-width="1.1"/>
<line x1="438" y1="555" x2="438" y2="589" stroke="#111" stroke-width="1.1"/>
<line x1="481" y1="555" x2="481" y2="589" stroke="#111" stroke-width="1.1"/>
</g>
<path d="M1182 278 H1236 M1180 310 H1236" fill="none" stroke="#111" stroke-width="1.1"/><line x1="1208" y1="278" x2="1208" y2="310" stroke="#111" stroke-width="1.1"/>
<rect x="1192" y="344" width="28" height="34" fill="none" stroke="#111" stroke-width="1.1"/>
<text x="688" y="311" font-size="30" font-family="Liberation Sans" fill="#111" textLength="25" lengthAdjust="spacingAndGlyphs">32</text>
<text x="258" y="405" font-size="30" font-family="Liberation Sans" fill="#111" textLength="38" lengthAdjust="spacingAndGlyphs">302</text>
<text x="258" y="436" font-size="30" font-family="Liberation Sans" fill="#111" textLength="37" lengthAdjust="spacingAndGlyphs">782</text>
<circle cx="289.04" cy="457.96" r="7.04" fill="none" stroke="#111" stroke-width="1.8"/><line x1="281" y1="470" x2="298.08" y2="446.92" stroke="#111" stroke-width="1.6"/>
<text x="296" y="467" font-size="30" font-family="Liberation Sans" fill="#111" textLength="34" lengthAdjust="spacingAndGlyphs">.01</text>
<circle cx="336" cy="457" r="9" fill="none" stroke="#111" stroke-width="1"/><text x="330.5" y="462" font-size="14" font-family="Liberation Sans" fill="#111" textLength="11" lengthAdjust="spacingAndGlyphs">M</text>
<text x="354" y="467" font-size="30" font-family="Liberation Sans" fill="#111" textLength="22" lengthAdjust="spacingAndGlyphs">M</text>
<text x="382" y="467" font-size="30" font-family="Liberation Sans" fill="#111" textLength="14" lengthAdjust="spacingAndGlyphs">L</text>
<circle cx="404" cy="458" r="9" fill="none" stroke="#111" stroke-width="1"/><text x="398.5" y="463" font-size="14" font-family="Liberation Sans" fill="#111" textLength="11" lengthAdjust="spacingAndGlyphs">M</text>
<text x="425" y="467" font-size="30" font-family="Liberation Sans" fill="#111" textLength="16" lengthAdjust="spacingAndGlyphs">K</text>
<circle cx="447" cy="457" r="9" fill="none" stroke="#111" stroke-width="1"/><text x="441.5" y="462" font-size="14" font-family="Liberation Sans" fill="#111" textLength="11" lengthAdjust="spacingAndGlyphs">M</text>
<circle cx="305.4" cy="528.6" r="6.4" fill="none" stroke="#111" stroke-width="1.8"/><line x1="298" y1="540" x2="313.8" y2="518.2" stroke="#111" stroke-width="1.6"/>
<text x="313" y="523" font-size="30" font-family="Liberation Sans" fill="#111" textLength="54" lengthAdjust="spacingAndGlyphs">.6848</text>
<text x="312" y="554" font-size="30" font-family="Liberation Sans" fill="#111" textLength="53" lengthAdjust="spacingAndGlyphs">.6648</text>
<g><circle cx="315" cy="576" r="7" fill="none" stroke="#111" stroke-width="1.3"/><line x1="306" y1="576" x2="324" y2="576" stroke="#111" stroke-width="1.3"/><line x1="315" y1="567" x2="315" y2="585" stroke="#111" stroke-width="1.3"/></g>
<circle cx="347.04" cy="575.96" r="7.04" fill="none" stroke="#111" stroke-width="1.8"/><line x1="339" y1="588" x2="356.08" y2="564.92" stroke="#111" stroke-width="1.6"/>
<text x="354" y="584" font-size="30" font-family="Liberation Sans" fill="#111" textLength="34" lengthAdjust="spacingAndGlyphs">.01</text>
<circle cx="395" cy="575" r="9" fill="none" stroke="#111" stroke-width="1"/><text x="389.5" y="580" font-size="14" font-family="Liberation Sans" fill="#111" textLength="11" lengthAdjust="spacingAndGlyphs">M</text>
<text x="415" y="583" font-size="30" font-family="Liberation Sans" fill="#111" textLength="19" lengthAdjust="spacingAndGlyphs">M</text>
<text x="443" y="583" font-size="30" font-family="Liberation Sans" fill="#111" textLength="14" lengthAdjust="spacingAndGlyphs">L</text>
<circle cx="465" cy="574" r="9" fill="none" stroke="#111" stroke-width="1"/><text x="459.5" y="579" font-size="14" font-family="Liberation Sans" fill="#111" textLength="11" lengthAdjust="spacingAndGlyphs">M</text>
<text x="485" y="583" font-size="30" font-family="Liberation Sans" fill="#111" textLength="16" lengthAdjust="spacingAndGlyphs">K</text>
<circle cx="509" cy="573" r="9" fill="none" stroke="#111" stroke-width="1"/><text x="503.5" y="578" font-size="14" font-family="Liberation Sans" fill="#111" textLength="11" lengthAdjust="spacingAndGlyphs">M</text>
<text x="609" y="695" font-size="30" font-family="Liberation Sans" fill="#111" textLength="24" lengthAdjust="spacingAndGlyphs">63</text>
<text x="485" y="789" font-size="30" font-family="Liberation Sans" fill="#111" textLength="24" lengthAdjust="spacingAndGlyphs">63</text>
<text x="747" y="684" font-size="30" font-family="Liberation Sans" fill="#111" textLength="24" lengthAdjust="spacingAndGlyphs">63</text>
<text x="751" y="492" font-size="30" font-family="Liberation Sans" fill="#111" textLength="53" lengthAdjust="spacingAndGlyphs">1.260</text>
<text x="718" y="568" font-size="30" font-family="Liberation Sans" fill="#111" textLength="73" lengthAdjust="spacingAndGlyphs">SR.430</text>
<text x="765" y="615" font-size="30" font-family="Liberation Sans" fill="#111" textLength="57" lengthAdjust="spacingAndGlyphs">R.020</text>
<circle cx="787" cy="196" r="6" fill="none" stroke="#111" stroke-width="1.6"/><line x1="780" y1="205" x2="795" y2="186" stroke="#111" stroke-width="1.5"/>
<text x="794" y="204" font-size="30" font-family="Liberation Sans" fill="#111" textLength="53" lengthAdjust="spacingAndGlyphs">1.753</text>
<text x="1158" y="391" font-size="30" font-family="Liberation Sans" fill="#111" textLength="24" lengthAdjust="spacingAndGlyphs">25</text>
<text x="1150" y="438" font-size="30" font-family="Liberation Sans" fill="#111" textLength="21" lengthAdjust="spacingAndGlyphs">88</text>
<text x="1147" y="480" font-size="30" font-family="Liberation Sans" fill="#111" textLength="72" lengthAdjust="spacingAndGlyphs">XR.010</text>
<text x="1137" y="528" font-size="30" font-family="Liberation Sans" fill="#111" textLength="21" lengthAdjust="spacingAndGlyphs">98</text>
<text x="1196" y="373" font-size="28" font-family="Liberation Sans" fill="#111" textLength="21" lengthAdjust="spacingAndGlyphs">M</text>
<text x="1214" y="305" font-size="28" font-family="Liberation Sans" fill="#111" textLength="19" lengthAdjust="spacingAndGlyphs">.0</text>
<path d="M1181 303 L1190 290 L1203 290 L1194 303 Z" fill="none" stroke="#111" stroke-width="1.6"/>
<text x="1225" y="552" font-size="30" font-family="Liberation Sans" fill="#111" textLength="6" lengthAdjust="spacingAndGlyphs">.</text>
<text x="1225" y="578" font-size="30" font-family="Liberation Sans" fill="#111" textLength="6" lengthAdjust="spacingAndGlyphs">.</text>
<path d="M1229 530 Q1234 536 1233 545" fill="none" stroke="#111" stroke-width="2"/><path d="M1229 560 Q1234 566 1233 575" fill="none" stroke="#111" stroke-width="2"/>
<path d="M318 758 V726" stroke="#1b9a3a" stroke-width="2.2"/><path d="M314.5 730 L318 719 L321.5 730 Z" fill="#2a7ad0"/>
<path d="M318 757 Q332 748 335 762" fill="none" stroke="#a02020" stroke-width="2"/>
<path d="M318 758 L344 756" stroke="#2a3a9a" stroke-width="2.5"/><path d="M322 762 L342 752" stroke="#1a2a7a" stroke-width="2.5"/>
<text x="314" y="716" font-size="10" font-family="Liberation Sans" fill="#222">Y</text><text x="348" y="761" font-size="10" font-family="Liberation Sans" fill="#222">X</text><text x="340" y="768" font-size="10" font-family="Liberation Sans" fill="#222">Z</text>
</svg>
<!-- /VIEW3D -->
<!-- HISTOGRAM HEADER -->
<div class="a" style="left:1238px;top:138px;width:682px;height:20px;background:linear-gradient(#c5d9f1,#bcd2ef 50%,#b7cdea)"></div>
<div class="t rb" style="left:1246px;top:142px;font-size:11.5px">Nominal 28606: Radial Dimension (919)</div>
<svg class="a" style="left:1905px;top:143px" width="10" height="10"><path d="M1 1L9 9M9 1L1 9" stroke="#6a7c94" stroke-width="1.2"/></svg>
<div class="a" style="left:1242px;top:158px;width:677px;height:657px;background:#fdfdfb;border-left:1px solid #707070;border-top:1px solid #707070;border-bottom:1px solid #9aa3ad"></div>
<!-- SIMULATION PANEL -->
<div class="a" style="left:257px;top:815px;width:1663px;height:240px;background:linear-gradient(#c9dcf4 0px,#e6edf8 5px,#eef2fa 20px,#e8eef9 40px,#d2e2f7 56px,#c5daf5 63px)"></div>
<div class="t rb" style="left:263px;top:823px;font-size:11.5px">Simulation</div>
<svg class="a" style="left:1905px;top:823px" width="10" height="10"><path d="M1 1L9 9M9 1L1 9" stroke="#6a7c94" stroke-width="1.2"/></svg>
<svg class="a" style="left:1243px;top:159px" width="676" height="655">
<line x1="36" y1="1" x2="36" y2="655" stroke="#111" stroke-width="1.3"/>
<line x1="30" y1="60.5" x2="641" y2="60.5" stroke="#111" stroke-width="1.3"/>
<line x1="30" y1="196" x2="641" y2="196" stroke="#111" stroke-width="1.3"/>
<line x1="30" y1="332" x2="641" y2="332" stroke="#111" stroke-width="1.3"/>
<line x1="30" y1="468" x2="641" y2="468" stroke="#111" stroke-width="1.3"/>
<line x1="0" y1="605.5" x2="641" y2="605.5" stroke="#111" stroke-width="1.3"/>
<rect x="40" y="603" width="55" height="2" fill="#4a5ff4"/>
<rect x="100" y="603" width="55" height="2" fill="#4a5ff4"/>
<rect x="160" y="522" width="55" height="83" fill="#4a5ff4"/>
<rect x="220" y="228" width="55" height="377" fill="#4a5ff4"/>
<rect x="280" y="396" width="55" height="209" fill="#4a5ff4"/>
<rect x="340" y="522" width="55" height="83" fill="#4a5ff4"/>
<rect x="400" y="60" width="55" height="545" fill="#4a5ff4"/>
<rect x="460" y="186" width="55" height="419" fill="#4a5ff4"/>
<rect x="520" y="479" width="55" height="126" fill="#4a5ff4"/>
<rect x="580" y="564" width="55" height="41" fill="#4a5ff4"/>
<text x="85.0" y="615.5" font-size="12.3" font-family="Liberation Sans" fill="#111" transform="rotate(46 85.0 615.5)">-0.01318</text>
<text x="145.0" y="615.5" font-size="12.3" font-family="Liberation Sans" fill="#111" transform="rotate(46 145.0 615.5)">-0.01029</text>
<text x="205.0" y="615.5" font-size="12.3" font-family="Liberation Sans" fill="#111" transform="rotate(46 205.0 615.5)">-0.00741</text>
<text x="265.0" y="615.5" font-size="12.3" font-family="Liberation Sans" fill="#111" transform="rotate(46 265.0 615.5)">-0.00453</text>
<text x="325.0" y="615.5" font-size="12.3" font-family="Liberation Sans" fill="#111" transform="rotate(46 325.0 615.5)">-0.00165</text>
<text x="385.0" y="615.5" font-size="12.3" font-family="Liberation Sans" fill="#111" transform="rotate(46 385.0 615.5)">0.001230</text>
<text x="445.0" y="615.5" font-size="12.3" font-family="Liberation Sans" fill="#111" transform="rotate(46 445.0 615.5)">0.004112</text>
<text x="505.0" y="615.5" font-size="12.3" font-family="Liberation Sans" fill="#111" transform="rotate(46 505.0 615.5)">0.006994</text>
<text x="565.0" y="615.5" font-size="12.3" font-family="Liberation Sans" fill="#111" transform="rotate(46 565.0 615.5)">0.009876</text>
<text x="625.0" y="615.5" font-size="12.3" font-family="Liberation Sans" fill="#111" transform="rotate(46 625.0 615.5)">0.012758</text>
</svg>
<div class="t" style="left:1279px;top:161px;font-size:11px;font-weight:bold;color:#111">Nominal 28606: Radial Dimension (919)</div>
<div class="t" style="left:1279px;top:175px;font-size:11px;font-weight:bold;color:#111">Uncertainty = 0.000511304</div>
<div class="t" style="left:1279px;top:189px;font-size:11px;font-weight:bold;color:#111">Mean Error = 3.60532e-06</div>
<div class="t" style="left:1279px;top:203px;font-size:11px;font-weight:bold;color:#111">Standard Deviation = 0.000253849</div>
<svg class="a" style="left:277px;top:842px" width="18" height="18" ><defs></defs><circle cx="9" cy="9" r="7.5" fill="#3f78d8" stroke="#6f7f95" stroke-width="0.8"/><circle cx="9" cy="7" r="4.5" fill="#fff" opacity="0.35"/><rect x="6" y="6" width="2" height="6" fill="#1a3a8a"/><rect x="10" y="6" width="2" height="6" fill="#1a3a8a"/></svg>
<svg class="a" style="left:322px;top:842px" width="18" height="18" ><defs></defs><circle cx="9" cy="9" r="7.5" fill="#3f78d8" stroke="#6f7f95" stroke-width="0.8"/><circle cx="9" cy="7" r="4.5" fill="#fff" opacity="0.35"/><rect x="6" y="6" width="6" height="6" fill="#1a3a8a"/></svg>
<svg class="a" style="left:436px;top:842px" width="18" height="18" opacity="0.55"><defs></defs><circle cx="9" cy="9" r="7.5" fill="#e05a5a" stroke="#6f7f95" stroke-width="0.8"/><circle cx="9" cy="7" r="4.5" fill="#fff" opacity="0.35"/></svg>
<svg class="a" style="left:500px;top:842px" width="18" height="18" opacity="0.55"><defs></defs><circle cx="9" cy="9" r="7.5" fill="#e05a5a" stroke="#6f7f95" stroke-width="0.8"/><circle cx="9" cy="7" r="4.5" fill="#fff" opacity="0.35"/></svg>
<svg class="a" style="left:566px;top:842px" width="18" height="18" opacity="0.55"><defs></defs><circle cx="9" cy="9" r="7.5" fill="#6dc36d" stroke="#6f7f95" stroke-width="0.8"/><circle cx="9" cy="7" r="4.5" fill="#fff" opacity="0.35"/></svg>
<svg class="a" style="left:626px;top:842px" width="18" height="18" opacity="0.55"><defs></defs><circle cx="9" cy="9" r="7.5" fill="#e05a5a" stroke="#6f7f95" stroke-width="0.8"/><circle cx="9" cy="7" r="4.5" fill="#fff" opacity="0.35"/></svg>
<div class="t rb" style="left:272px;top:863px;font-size:11.5px">Pause</div>
<div class="t rb" style="left:320px;top:863px;font-size:11.5px">Stop</div>
<div class="a" style="left:356px;top:846px;width:1px;height:28px;background:#a9bcd6;border-right:1px solid #f4f8fc"></div>
<div class="a" style="left:419px;top:846px;width:1px;height:28px;background:#a9bcd6;border-right:1px solid #f4f8fc"></div>
<div class="a" style="left:675px;top:846px;width:1px;height:28px;background:#a9bcd6;border-right:1px solid #f4f8fc"></div>
<div class="a" style="left:754px;top:846px;width:1px;height:28px;background:#a9bcd6;border-right:1px solid #f4f8fc"></div>
<div class="a" style="left:362px;top:841px;width:51px;height:19px;border:1px solid #abc0dc;background:#fff"></div>
<div class="t" style="left:366px;top:846px;font-size:11.5px">1000</div>
<svg class="a" style="left:402px;top:848px" width="7" height="4"><path d="M0 0h6l-3 3z" fill="#555"/></svg>
<div class="t dis" style="left:367px;top:863px;font-size:11.5px">Cycles #</div>
<div class="t dis" style="left:432px;top:863px;font-size:11.5px">CMM</div>
<div class="t dis" style="left:477px;top:863px;font-size:11.5px">Environment</div>
<div class="t dis" style="left:561px;top:863px;font-size:11.5px">Probe</div>
<div class="t dis" style="left:609px;top:863px;font-size:11.5px">Form Error</div>
<div class="a" style="left:679px;top:840px;width:71px;height:36px;border:1px solid #d9a23c;border-radius:3px;background:linear-gradient(#fde3a3,#fbc66c 45%,#f8b552 50%,#fcd68a 85%,#fee6a8)"></div>
<svg class="a" style="left:705px;top:842px" width="18" height="16"><path d="M1 15h16" stroke="#2d4f8e"/><rect x="3" y="8" width="2.5" height="7" fill="#3d6fc0"/><rect x="6.5" y="3" width="2.5" height="12" fill="#3d6fc0"/><rect x="10" y="1" width="2.5" height="14" fill="#3d6fc0"/><rect x="13.5" y="6" width="2.5" height="9" fill="#3d6fc0"/></svg>
<div class="t" style="left:689px;top:863px;font-size:11.5px;color:#1d2a40">Histogram</div>
<svg class="a" style="left:791px;top:843px" width="18" height="16" opacity="0.6"><rect x="2" y="1" width="14" height="14" fill="#fff" stroke="#6a8ac0"/><rect x="1" y="5" width="16" height="6" fill="#4f7fd0"/><text x="9" y="10" font-size="5" fill="#fff" text-anchor="middle" font-family="Liberation Sans">HTM</text></svg>
<svg class="a" style="left:876px;top:842px" width="18" height="16" opacity="0.4"><path d="M4 14l10-10" stroke="#777" stroke-width="2"/></svg>
<div class="t dis" style="left:768px;top:863px;font-size:11.5px">HTML Report</div>
<div class="t dis" style="left:852px;top:863px;font-size:11.5px">Text Report</div>
<div class="a" style="left:259px;top:878px;width:1660px;height:177px;background:#fdfdfb;border:1px solid #a9b9cf;border-bottom-color:#8c939c"></div>
<div class="a" style="left:260px;top:879px;width:1643px;height:20px;background:linear-gradient(#fafcfe,#eef3f9 50%,#e3eaf3);border-bottom:1px solid #c9d2de"></div>
<div class="t" style="left:265px;top:884px;font-size:11.5px;color:#1e1e1e">Feature</div>
<div class="t" style="left:458px;top:884px;font-size:11.5px;color:#1e1e1e">GD&amp;T</div>
<div class="t" style="left:828px;top:884px;font-size:11.5px;color:#1e1e1e">Tolerance</div>
<div class="t" style="left:1034px;top:884px;font-size:11.5px;color:#1e1e1e">Standard Deviation</div>
<div class="t" style="left:1184px;top:884px;font-size:11.5px;color:#1e1e1e">Mean Error</div>
<div class="t" style="left:1285px;top:884px;font-size:11.5px;color:#1e1e1e">Uncertainty</div>
<div class="t" style="left:1384px;top:884px;font-size:11.5px;color:#1e1e1e">Bandwidth Consumed</div>
<div class="a" style="left:453px;top:880px;width:1px;height:19px;background:#d5dde8"></div>
<div class="a" style="left:822px;top:880px;width:1px;height:19px;background:#d5dde8"></div>
<div class="a" style="left:1028px;top:880px;width:1px;height:19px;background:#d5dde8"></div>
<div class="a" style="left:1178px;top:880px;width:1px;height:19px;background:#d5dde8"></div>
<div class="a" style="left:1279px;top:880px;width:1px;height:19px;background:#d5dde8"></div>
<div class="a" style="left:1378px;top:880px;width:1px;height:19px;background:#d5dde8"></div>
<div class="a" style="left:1528px;top:880px;width:1px;height:19px;background:#d5dde8"></div>
<svg class="a" style="left:1509px;top:882px" width="14" height="13"><path d="M1 1h12L7 12z" fill="none" stroke="#c8cdd4"/></svg>
<div class="a" style="left:1903px;top:879px;width:16px;height:175px;background:#fdfdfb"></div>
<svg class="a" style="left:1906px;top:882px" width="11" height="8"><path d="M1 6l4.5-4.5L10 6" fill="none" stroke="#333" stroke-width="1.3"/></svg>
<svg class="a" style="left:1906px;top:1043px" width="11" height="8"><path d="M1 2l4.5 4.5L10 2" fill="none" stroke="#333" stroke-width="1.3"/></svg>
<div class="a" style="left:1904px;top:960px;width:14px;height:17px;background:#c9c9c9"></div>
<!-- ROWS -->
<div class="a" style="left:260px;top:919px;width:1643px;height:1px;background:#eef0f2"></div>
<svg class="a" style="left:264px;top:903px" width="15" height="15"><path d="M1.5 3.5v8a6 2.5 0 0 0 12 0v-8" fill="#f4f4f4" stroke="#333" stroke-width="1.1"/><ellipse cx="7.5" cy="3.5" rx="6" ry="2.5" fill="#f4f4f4" stroke="#333" stroke-width="1.1"/><path d="M1.5 7.5a6 2.5 0 0 0 12 0" fill="none" stroke="#555" stroke-width="0.8"/></svg>
<div class="t" style="left:282px;top:906px;font-size:11.5px;color:#111">Nominal 28716</div>
<div class="t" style="left:459px;top:905px;font-size:11.5px;color:#111">&#216;.6848-.6648</div>
<div class="t" style="left:828px;top:906px;font-size:11.5px;color:#111">Cylindrical Dimension (413) "CN76"</div>
<div class="t" style="left:1034px;top:906px;font-size:11.5px;color:#111">0.000260819261</div>
<div class="t" style="left:1185px;top:906px;font-size:11.5px;color:#111">-4.85925453E-05</div>
<div class="t" style="left:1285px;top:906px;font-size:11px;font-weight:bold;color:#111">0.000570231068</div>
<div class="t" style="left:1385px;top:906px;font-size:11.5px;color:#111">3%</div>
<div class="a" style="left:1430px;top:902px;width:98px;height:16px;border:1px solid #9a9a9a;background:#fff"></div>
<div class="a" style="left:1431px;top:903px;width:2px;height:14px;background:#1a5a3a"></div>
<div class="a" style="left:281px;top:920px;width:1247px;height:18px;background:#0a6ad6"></div>
<div class="a" style="left:1380px;top:920px;width:50px;height:18px;background:#0a6ad6"></div>
<svg class="a" style="left:264px;top:922px" width="15" height="15"><path d="M1.5 3.5v8a6 2.5 0 0 0 12 0v-8" fill="#4a8ad8" stroke="#333" stroke-width="1.1"/><ellipse cx="7.5" cy="3.5" rx="6" ry="2.5" fill="#4a8ad8" stroke="#333" stroke-width="1.1"/><path d="M1.5 7.5a6 2.5 0 0 0 12 0" fill="none" stroke="#555" stroke-width="0.8"/></svg>
<div class="t" style="left:282px;top:925px;font-size:11.5px;color:#fff">Nominal 28606</div>
<div class="t" style="left:459px;top:924px;font-size:11.5px;color:#fff">&#216;.611-.631X</div>
<div class="t" style="left:531px;top:924px;font-size:11.5px;color:#fff">.39-.41</div>
<svg class="a" style="left:575px;top:923px" width="10" height="12"><path d="M1 1.5h8M5 1.5v9M2 6l3 4.5 3-4.5" fill="none" stroke="#fff" stroke-width="1.2"/></svg>
<svg class="a" style="left:588px;top:922px" width="17" height="12"><path d="M1 1l7.5 10L16 1" fill="none" stroke="#fff" stroke-width="1.1"/></svg>
<div class="t" style="left:607px;top:924px;font-size:11.5px;color:#fff">60&#176;</div>
<div class="t" style="left:634px;top:924px;font-size:11.5px;color:#fff">TO</div>
<div class="t" style="left:660px;top:924px;font-size:11.5px;color:#fff">&#216;.675</div>
<div class="t" style="left:828px;top:925px;font-size:11.5px;color:#fff">Radial Dimension (919)</div>
<div class="t" style="left:1034px;top:925px;font-size:11.5px;color:#fff">0.000249362563</div>
<div class="t" style="left:1185px;top:925px;font-size:11.5px;color:#fff">-1.27015121E-05</div>
<div class="t" style="left:1285px;top:925px;font-size:11px;font-weight:bold;color:#fff">0.000511426638</div>
<div class="t" style="left:1385px;top:925px;font-size:11.5px;color:#fff">3%</div>
<div class="a" style="left:1430px;top:921px;width:98px;height:16px;border:1px solid #9a9a9a;background:#0a6ad6"></div>
<div class="a" style="left:1431px;top:922px;width:2px;height:14px;background:#1a5a3a"></div>
<div class="a" style="left:260px;top:957px;width:1643px;height:1px;background:#eef0f2"></div>
<svg class="a" style="left:264px;top:941px" width="15" height="15"><path d="M1.5 3.5v8a6 2.5 0 0 0 12 0v-8" fill="#f4f4f4" stroke="#333" stroke-width="1.1"/><ellipse cx="7.5" cy="3.5" rx="6" ry="2.5" fill="#f4f4f4" stroke="#333" stroke-width="1.1"/><path d="M1.5 7.5a6 2.5 0 0 0 12 0" fill="none" stroke="#555" stroke-width="0.8"/></svg>
<div class="t" style="left:282px;top:944px;font-size:11.5px;color:#111">Nominal 28632</div>
<div class="t" style="left:459px;top:943px;font-size:11.5px;color:#111">&#216;.250</div>
<div class="t" style="left:498px;top:943px;font-size:11.5px;color:#111">&#177;.010THRU</div>
<div class="t" style="left:828px;top:944px;font-size:11.5px;color:#111">Radial Dimension (76) "CN140"</div>
<div class="t" style="left:1034px;top:944px;font-size:11.5px;color:#111">0.000249249657</div>
<div class="t" style="left:1185px;top:944px;font-size:11.5px;color:#111">-1.91760539E-07</div>
<div class="t" style="left:1285px;top:944px;font-size:11px;font-weight:bold;color:#111">0.000498691074</div>
<div class="t" style="left:1385px;top:944px;font-size:11.5px;color:#111">2%</div>
<div class="a" style="left:1430px;top:940px;width:98px;height:16px;border:1px solid #9a9a9a;background:#fff"></div>
<div class="a" style="left:1431px;top:941px;width:2px;height:14px;background:#1a5a3a"></div>
<div class="a" style="left:260px;top:976px;width:1643px;height:1px;background:#eef0f2"></div>
<svg class="a" style="left:264px;top:960px" width="15" height="15"><path d="M1.5 3.5v8a6 2.5 0 0 0 12 0v-8" fill="#f4f4f4" stroke="#333" stroke-width="1.1"/><ellipse cx="7.5" cy="3.5" rx="6" ry="2.5" fill="#f4f4f4" stroke="#333" stroke-width="1.1"/><path d="M1.5 7.5a6 2.5 0 0 0 12 0" fill="none" stroke="#555" stroke-width="0.8"/></svg>
<div class="t" style="left:282px;top:963px;font-size:11.5px;color:#111">Nominal 28662</div>
<div class="t" style="left:459px;top:962px;font-size:11.5px;color:#111">&#216;.1892</div>
<div class="t" style="left:503px;top:962px;font-size:11.5px;color:#111">X.400</div>
<svg class="a" style="left:540px;top:961px" width="10" height="12"><path d="M1 1.5h8M5 1.5v9M2 6l3 4.5 3-4.5" fill="none" stroke="#111" stroke-width="1.2"/></svg>
<div class="t" style="left:550px;top:962px;font-size:11.5px;color:#111;letter-spacing:-0.2px">&#216;.1787-.1987X</div>
<div class="t" style="left:636px;top:962px;font-size:11.5px;color:#111">.280</div>
<svg class="a" style="left:665px;top:961px" width="10" height="12"><path d="M1 1.5h8M5 1.5v9M2 6l3 4.5 3-4.5" fill="none" stroke="#111" stroke-width="1.2"/></svg>
<div class="t" style="left:828px;top:963px;font-size:11.5px;color:#111">Radial Dimension (44) "CN125"</div>
<div class="t" style="left:1034px;top:963px;font-size:11.5px;color:#111">0.000251373698</div>
<div class="t" style="left:1185px;top:963px;font-size:11.5px;color:#111">-3.47907116E-06</div>
<div class="t" style="left:1285px;top:963px;font-size:11px;font-weight:bold;color:#111">0.000506226466</div>
<div class="t" style="left:1385px;top:963px;font-size:11.5px;color:#111">3%</div>
<div class="a" style="left:1430px;top:959px;width:98px;height:16px;border:1px solid #9a9a9a;background:#fff"></div>
<div class="a" style="left:1431px;top:960px;width:2px;height:14px;background:#1a5a3a"></div>
<div class="a" style="left:260px;top:995px;width:1643px;height:1px;background:#eef0f2"></div>
<svg class="a" style="left:264px;top:979px" width="15" height="15"><path d="M1.5 3.5v8a6 2.5 0 0 0 12 0v-8" fill="#f4f4f4" stroke="#333" stroke-width="1.1"/><ellipse cx="7.5" cy="3.5" rx="6" ry="2.5" fill="#f4f4f4" stroke="#333" stroke-width="1.1"/><path d="M1.5 7.5a6 2.5 0 0 0 12 0" fill="none" stroke="#555" stroke-width="0.8"/></svg>
<div class="t" style="left:282px;top:982px;font-size:11.5px;color:#111">Nominal 28625</div>
<div class="t" style="left:459px;top:981px;font-size:11.5px;color:#111">&#216;.250</div>
<div class="t" style="left:498px;top:981px;font-size:11.5px;color:#111">&#177;.010THRU</div>
<div class="t" style="left:828px;top:982px;font-size:11.5px;color:#111">Radial Dimension (76) "CN140"</div>
<div class="t" style="left:1034px;top:982px;font-size:11.5px;color:#111">0.000246108189</div>
<div class="t" style="left:1185px;top:982px;font-size:11.5px;color:#111">-1.02187781E-05</div>
<div class="t" style="left:1285px;top:982px;font-size:11px;font-weight:bold;color:#111">0.000502435156</div>
<div class="t" style="left:1385px;top:982px;font-size:11.5px;color:#111">3%</div>
<div class="a" style="left:1430px;top:978px;width:98px;height:16px;border:1px solid #9a9a9a;background:#fff"></div>
<div class="a" style="left:1431px;top:979px;width:2px;height:14px;background:#1a5a3a"></div>
<div class="a" style="left:260px;top:1014px;width:1643px;height:1px;background:#eef0f2"></div>
<svg class="a" style="left:264px;top:998px" width="15" height="15"><path d="M1.5 3.5v8a6 2.5 0 0 0 12 0v-8" fill="#f4f4f4" stroke="#333" stroke-width="1.1"/><ellipse cx="7.5" cy="3.5" rx="6" ry="2.5" fill="#f4f4f4" stroke="#333" stroke-width="1.1"/><path d="M1.5 7.5a6 2.5 0 0 0 12 0" fill="none" stroke="#555" stroke-width="0.8"/></svg>
<div class="t" style="left:282px;top:1001px;font-size:11.5px;color:#111">Nominal 28662</div>
<div class="a" style="left:461px;top:996px;width:116px;height:18px;border:1.5px solid #222"></div>
<div class="a" style="left:488px;top:996px;width:1.5px;height:18px;background:#222"></div>
<div class="a" style="left:533px;top:996px;width:1.5px;height:18px;background:#222"></div>
<div class="a" style="left:547px;top:996px;width:1.5px;height:18px;background:#222"></div>
<svg class="a" style="left:467px;top:998px" width="14" height="14"><circle cx="7" cy="7" r="4.5" fill="none" stroke="#111" stroke-width="1.2"/><path d="M1 7h12M7 1v12" stroke="#111" stroke-width="1.2"/></svg>
<div class="t" style="left:491px;top:1000px;font-size:11.5px;color:#111">&#216;.01</div>
<svg class="a" style="left:515px;top:998px" width="14" height="14"><circle cx="7" cy="7" r="6" fill="none" stroke="#111" stroke-width="1"/><text x="3" y="10.5" font-size="9" font-family="Liberation Sans" fill="#111">M</text></svg>
<div class="t" style="left:535px;top:1000px;font-size:11.5px;color:#111">M</div>
<div class="t" style="left:550px;top:1000px;font-size:11.5px;color:#111">K</div>
<svg class="a" style="left:558px;top:998px" width="14" height="14"><circle cx="7" cy="7" r="6" fill="none" stroke="#111" stroke-width="1"/><text x="3" y="10.5" font-size="9" font-family="Liberation Sans" fill="#111">M</text></svg>
<div class="t" style="left:828px;top:1001px;font-size:11.5px;color:#111">Feature Control Frame (45) "CN127"</div>
<div class="t" style="left:1034px;top:1001px;font-size:11.5px;color:#111">7.28991222E-05</div>
<div class="t" style="left:1185px;top:1001px;font-size:11.5px;color:#111">0.000191137713</div>
<div class="t" style="left:1285px;top:1001px;font-size:11px;font-weight:bold;color:#111">0.000336935957</div>
<div class="t" style="left:1385px;top:1001px;font-size:11.5px;color:#111">3%</div>
<div class="a" style="left:1430px;top:997px;width:98px;height:16px;border:1px solid #9a9a9a;background:#fff"></div>
<div class="a" style="left:1431px;top:998px;width:2px;height:14px;background:#1a5a3a"></div>
<div class="a" style="left:260px;top:1033px;width:1643px;height:1px;background:#eef0f2"></div>
<svg class="a" style="left:264px;top:1017px" width="15" height="15"><path d="M1.5 3.5v8a6 2.5 0 0 0 12 0v-8" fill="#f4f4f4" stroke="#333" stroke-width="1.1"/><ellipse cx="7.5" cy="3.5" rx="6" ry="2.5" fill="#f4f4f4" stroke="#333" stroke-width="1.1"/><path d="M1.5 7.5a6 2.5 0 0 0 12 0" fill="none" stroke="#555" stroke-width="0.8"/></svg>
<div class="t" style="left:282px;top:1020px;font-size:11.5px;color:#111">Nominal 28722</div>
<div class="a" style="left:461px;top:1015px;width:116px;height:18px;border:1.5px solid #222"></div>
<div class="a" style="left:488px;top:1015px;width:1.5px;height:18px;background:#222"></div>
<div class="a" style="left:533px;top:1015px;width:1.5px;height:18px;background:#222"></div>
<div class="a" style="left:547px;top:1015px;width:1.5px;height:18px;background:#222"></div>
<svg class="a" style="left:467px;top:1017px" width="14" height="14"><circle cx="7" cy="7" r="4.5" fill="none" stroke="#111" stroke-width="1.2"/><path d="M1 7h12M7 1v12" stroke="#111" stroke-width="1.2"/></svg>
<div class="t" style="left:491px;top:1019px;font-size:11.5px;color:#111">&#216;.01</div>
<svg class="a" style="left:515px;top:1017px" width="14" height="14"><circle cx="7" cy="7" r="6" fill="none" stroke="#111" stroke-width="1"/><text x="3" y="10.5" font-size="9" font-family="Liberation Sans" fill="#111">M</text></svg>
<div class="t" style="left:535px;top:1019px;font-size:11.5px;color:#111">M</div>
<div class="t" style="left:550px;top:1019px;font-size:11.5px;color:#111">L</div>
<svg class="a" style="left:558px;top:1017px" width="14" height="14"><circle cx="7" cy="7" r="6" fill="none" stroke="#111" stroke-width="1"/><text x="3" y="10.5" font-size="9" font-family="Liberation Sans" fill="#111">M</text></svg>
<div class="t" style="left:828px;top:1020px;font-size:11.5px;color:#111">Feature Control Frame (49) "CN134"</div>
<div class="t" style="left:1034px;top:1020px;font-size:11.5px;color:#111">8.04543261E-05</div>
<div class="t" style="left:1185px;top:1020px;font-size:11.5px;color:#111">0.000162900499</div>
<div class="t" style="left:1285px;top:1020px;font-size:11px;font-weight:bold;color:#111">0.000323809151</div>
<div class="t" style="left:1385px;top:1020px;font-size:11.5px;color:#111">3%</div>
<div class="a" style="left:1430px;top:1016px;width:98px;height:16px;border:1px solid #9a9a9a;background:#fff"></div>
<div class="a" style="left:1431px;top:1017px;width:2px;height:14px;background:#1a5a3a"></div>
<div class="a" style="left:260px;top:1052px;width:1643px;height:1px;background:#eef0f2"></div>
<svg class="a" style="left:264px;top:1036px" width="15" height="15"><path d="M1.5 3.5v8a6 2.5 0 0 0 12 0v-8" fill="#f4f4f4" stroke="#333" stroke-width="1.1"/><ellipse cx="7.5" cy="3.5" rx="6" ry="2.5" fill="#f4f4f4" stroke="#333" stroke-width="1.1"/><path d="M1.5 7.5a6 2.5 0 0 0 12 0" fill="none" stroke="#555" stroke-width="0.8"/></svg>
<div class="t" style="left:282px;top:1039px;font-size:11.5px;color:#111">Nominal 28662 - Nominal 28771</div>
<div class="t" style="left:459px;top:1038px;font-size:11.5px;color:#111">6.930-6.910</div>
<div class="t" style="left:828px;top:1039px;font-size:11.5px;color:#111">Linear Dimension (493) "CN103"</div>
<div class="t" style="left:1034px;top:1039px;font-size:11.5px;color:#111">0.00012315193</div>
<div class="t" style="left:1185px;top:1039px;font-size:11.5px;color:#111">5.20789967E-06</div>
<div class="t" style="left:1285px;top:1039px;font-size:11px;font-weight:bold;color:#111">0.000251511759</div>
<div class="t" style="left:1385px;top:1039px;font-size:11.5px;color:#111">1%</div>
<div class="a" style="left:1430px;top:1035px;width:98px;height:16px;border:1px solid #9a9a9a;background:#fff"></div>
<!-- /ROWS -->
<!-- STATUS BAR -->
<div class="a" style="left:0;top:1055px;width:1920px;height:25px;background:linear-gradient(#c7dcf5,#d6e6f9 50%,#cde0f6)"></div>
<div class="a" style="left:6px;top:1064px;width:169px;height:8px;border:1px solid #9aa9bb;border-radius:2px;background:linear-gradient(#f2f5f9,#dde4ec)"></div>
<div class="a" style="left:7px;top:1065px;width:9px;height:6px;background:#a9c98a"></div>
<div class="t" style="left:189px;top:1062px;font-size:11.5px;color:#8b97a6">Processing...</div>

<div class="a" style="left:1475px;top:1056px;width:1px;height:24px;background:#9fb3cf;border-right:1px solid #e8f0fa"></div>
<div class="a" style="left:1477px;top:1056px;width:443px;height:24px;background:linear-gradient(#b5cdee,#c9dcf4)"></div>
<div class="a" style="left:1537px;top:1058px;width:46px;height:22px;border:1px solid #a8bedb;border-radius:3px;background:linear-gradient(#e6eef8,#cfdcee)"></div>
<div class="a" style="left:1586px;top:1058px;width:73px;height:22px;border:1px solid #a8bedb;border-radius:3px;background:linear-gradient(#e6eef8,#cfdcee)"></div>
<div class="a" style="left:1661px;top:1058px;width:26px;height:22px;border:1px solid #a8bedb;border-radius:3px;background:linear-gradient(#e6eef8,#cfdcee)"></div>
<div class="a" style="left:1690px;top:1058px;width:121px;height:22px;border:1px solid #a8bedb;border-radius:3px;background:linear-gradient(#e6eef8,#cfdcee)"></div>
<div class="a" style="left:1814px;top:1058px;width:50px;height:22px;border:1px solid #a8bedb;border-radius:3px;background:linear-gradient(#e6eef8,#cfdcee)"></div>
<div class="a" style="left:1866px;top:1058px;width:26px;height:22px;border:1px solid #a8bedb;border-radius:3px;background:linear-gradient(#e6eef8,#cfdcee)"></div>
<div class="a" style="left:1894px;top:1058px;width:26px;height:22px;border:1px solid #a8bedb;border-radius:3px;background:linear-gradient(#e6eef8,#cfdcee)"></div>
<svg class="a" style="left:1541px;top:1058px" width="22" height="20"><path d="M2 6l5-3h8v11l-5 3H2z" fill="#f2d68a" stroke="#8a6a2a"/><path d="M9 3h9l-4 5v6l-2-1V8z" fill="#5a9ae0" stroke="#1a3a7a"/></svg>
<svg class="a" style="left:1564px;top:1058px" width="22" height="20"><path d="M2 8a4 2 0 0 1 8 0v8a4 2 0 0 1-8 0z" fill="#d8c8a8" stroke="#6a5a3a"/><path d="M9 8h6v8H9z" fill="#f0d078" stroke="#6a5a3a"/><path d="M10 2h9l-4 5v6l-2-1V7z" fill="#5a9ae0" stroke="#1a3a7a"/></svg>
<svg class="a" style="left:1590px;top:1058px" width="22" height="20"><path d="M2 12l8-6 8 3-7 7z" fill="#3a8ad8" stroke="#0a2a6a"/><path d="M9 2h9l-4 5v5l-2-1V7z" fill="#5a9ae0" stroke="#1a3a7a"/></svg>
<svg class="a" style="left:1614px;top:1058px" width="22" height="20"><path d="M4 3q8 6 0 14" fill="none" stroke="#1a6aa0" stroke-width="2"/><circle cx="4" cy="3" r="1.5" fill="#1a6aa0"/><circle cx="4" cy="17" r="1.5" fill="#1a6aa0"/><path d="M10 2h9l-4 5v5l-2-1V7z" fill="#fff" stroke="#1a3a7a"/></svg>
<svg class="a" style="left:1640px;top:1058px" width="22" height="20"><circle cx="4" cy="15" r="1.5" fill="#1a3a7a"/><path d="M10 2h9l-4 5v5l-2-1V7z" fill="#fff" stroke="#1a3a7a"/></svg>
<svg class="a" style="left:1665px;top:1058px" width="22" height="20"><path d="M2 12l3 5 5-10" fill="none" stroke="#222" stroke-width="1.5"/><path d="M10 2h9l-4 5v5l-2-1V7z" fill="#fff" stroke="#1a3a7a"/></svg>
<svg class="a" style="left:1693px;top:1058px" width="22" height="20"><path d="M3 5h10v12H3z" fill="#8a8a8a"/><path d="M10 2h9l-4 5v5l-2-1V7z" fill="#8a8a8a"/></svg>
<svg class="a" style="left:1720px;top:1058px" width="22" height="20"><path d="M2 3h14l-6 12z" fill="#8a8a8a"/></svg>
<svg class="a" style="left:1744px;top:1058px" width="22" height="20"><path d="M3 5l10 10M3 15h10" stroke="#8a8a8a" stroke-width="2"/><path d="M10 2h9l-4 5v5l-2-1V7z" fill="#8a8a8a"/></svg>
<svg class="a" style="left:1768px;top:1058px" width="22" height="20"><path d="M2 17l7-12 7 12z" fill="none" stroke="#8a8a8a" stroke-width="2"/><path d="M10 2h9l-4 5v5l-2-1V7z" fill="#8a8a8a"/></svg>
<svg class="a" style="left:1792px;top:1058px" width="22" height="20"><path d="M3 3v14h12z" fill="none" stroke="#8a8a8a" stroke-width="2"/></svg>
<svg class="a" style="left:1818px;top:1058px" width="22" height="20"><g fill="#8a8a8a"><circle cx="4" cy="10" r="1.5"/><circle cx="8" cy="14" r="1.5"/><circle cx="12" cy="9" r="1.5"/><circle cx="6" cy="17" r="1.5"/></g><path d="M10 2h9l-4 5v5l-2-1V7z" fill="#8a8a8a"/></svg>
<svg class="a" style="left:1844px;top:1058px" width="22" height="20"><g fill="#8a8a8a"><circle cx="4" cy="10" r="1.5"/><circle cx="4" cy="16" r="1.5"/></g><path d="M10 2h9l-4 5v5l-2-1V7z" fill="#8a8a8a"/></svg>
<svg class="a" style="left:1870px;top:1058px" width="22" height="20"><path d="M2 6h12v12H2z" fill="#f4c81a" stroke="#6a5a1a"/><path d="M10 2h9l-4 5v5l-2-1V7z" fill="#fff" stroke="#1a3a7a"/></svg>
<svg class="a" style="left:1897px;top:1058px" width="22" height="20"><path d="M2 4h14l3 4v10H2z" fill="#8a8a8a"/></svg>
<!-- END -->
</body></html>
